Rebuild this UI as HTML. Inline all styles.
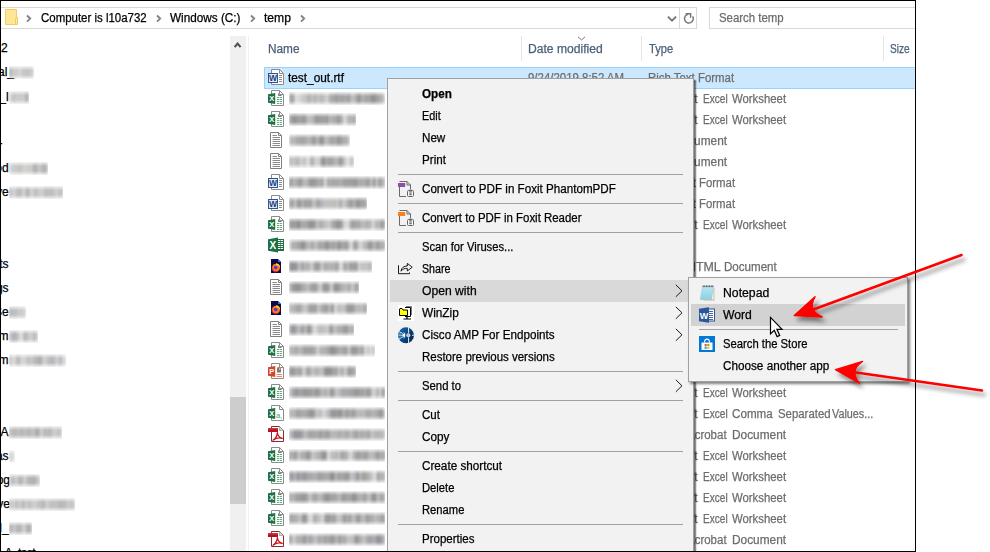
<!DOCTYPE html>
<html><head><meta charset="utf-8"><title>Open with</title>
<style>
html,body{margin:0;padding:0;background:#fff}
body{width:990px;height:552px;position:relative;overflow:hidden;font-family:'Liberation Sans',sans-serif;font-size:12px;color:#000}
#win{position:absolute;left:0;top:0;width:916px;height:552px;overflow:hidden;background:#fff}
#frame{position:absolute;left:0;top:0;width:916px;height:552px;box-sizing:border-box;border:1px solid #000;z-index:50;pointer-events:none}
.t{position:absolute;white-space:pre;line-height:22px;height:22px;font-size:12px;transform-origin:0 50%;-webkit-text-stroke:.25px}
.ic{position:absolute;overflow:visible}
.bl{position:absolute;filter:blur(1.7px);-webkit-mask-image:linear-gradient(180deg,rgba(0,0,0,.35),#000 35%,#000 65%,rgba(0,0,0,.35));mask-image:linear-gradient(180deg,rgba(0,0,0,.35),#000 35%,#000 65%,rgba(0,0,0,.35))}
.lb{background-color:#fff}
.ln{position:absolute;background:#d9d9d9}
#menu{position:absolute;left:387px;top:78px;width:307px;height:480px;box-sizing:border-box;background:#f2f2f2;border:1px solid #a0a0a0;box-shadow:2px 2px 1.2px rgba(0,0,0,.55)}
#sub{position:absolute;left:688px;top:277px;width:220px;height:105px;box-sizing:border-box;background:#f2f2f2;border:1px solid #a0a0a0;box-shadow:2px 2px 2.5px rgba(0,0,0,.5)}
.sep{position:absolute;height:1px;background:#a0a0a0}
.hl{position:absolute;background:#d9d9d9}
.chev{position:absolute}
</style></head><body>
<div id="win">
<!-- address bar -->
<div style="position:absolute;left:-2px;top:7px;width:699px;height:22px;box-sizing:border-box;border:1px solid #d9d9d9"></div>
<div class="ln" style="left:679px;top:8px;width:1px;height:20px"></div>
<div style="position:absolute;left:709px;top:7px;width:220px;height:22px;box-sizing:border-box;border:1px solid #d9d9d9"></div>
<svg class="ic" style="left:5px;top:9px" width="14" height="17" viewBox="0 0 14 17"><path d="M.5 .5H11.5V8.5H12.5V15.5H.5Z" fill="#ffe596" stroke="#f2cd5e"/><path d="M10.5 15V9.5Q10.5 8.5 11.5 8.5H12.5" fill="none" stroke="#f2cd5e"/></svg>
<svg class="chev" style="left:26px;top:14px" width="6" height="9" viewBox="0 0 6 9"><path d="M1 1.5L4.2 4.6L1 7.7" fill="none" stroke="#808080" stroke-width="1.8"/></svg>
<svg class="chev" style="left:156px;top:14px" width="6" height="9" viewBox="0 0 6 9"><path d="M1 1.5L4.2 4.6L1 7.7" fill="none" stroke="#808080" stroke-width="1.8"/></svg>
<svg class="chev" style="left:250px;top:14px" width="6" height="9" viewBox="0 0 6 9"><path d="M1 1.5L4.2 4.6L1 7.7" fill="none" stroke="#808080" stroke-width="1.8"/></svg>
<svg class="chev" style="left:300px;top:14px" width="6" height="9" viewBox="0 0 6 9"><path d="M1 1.5L4.2 4.6L1 7.7" fill="none" stroke="#808080" stroke-width="1.8"/></svg>
<svg class="chev" style="left:667px;top:14px" width="10" height="9" viewBox="0 0 10 9"><path d="M.9 2.6L5 6.7L9.1 2.6" fill="none" stroke="#777" stroke-width="1.9"/></svg>
<svg class="chev" style="left:682px;top:11px" width="13" height="14" viewBox="0 0 13 14"><path d="M10.7 5.4A4.4 4.4 0 1 1 6.1 3.27" fill="none" stroke="#777" stroke-width="1.5"/><path d="M3.6 2.7H8.6V6.8" fill="none" stroke="#777" stroke-width="1.5"/></svg>
<!-- left pane scrollbar -->
<div style="position:absolute;left:230px;top:36px;width:16px;height:520px;background:#f0f0f0"></div>
<div style="position:absolute;left:230px;top:397px;width:16px;height:107px;background:#cdcdcd"></div>
<svg class="chev" style="left:233px;top:41px" width="10" height="8" viewBox="0 0 10 8"><path d="M1.6 6.2L4.6 2.6L7.6 6.2" fill="none" stroke="#505050" stroke-width="2.1"/></svg>
<div class="ln" style="left:248px;top:36px;width:1px;height:520px;background:#f0f0f0"></div>
<div class="t lt" style="right:908.4px;top:37px">42</div>
<div class="t lt" style="right:902.0px;top:61px">al_</div>
<div class="bl lb" style="left:9px;top:65.5px;width:25px;height:13px;background:linear-gradient(90deg,rgb(175,175,177) 0px,rgb(175,175,177) 3px,rgb(208,208,208) 3px,rgb(208,208,208) 6px,rgb(197,197,194) 6px,rgb(197,197,194) 9px,rgb(223,223,223) 9px,rgb(223,223,223) 11px,rgb(204,204,205) 11px,rgb(204,204,205) 14px,rgb(197,197,202) 14px,rgb(197,197,202) 18px,rgb(197,197,200) 18px,rgb(197,197,200) 22px,rgb(208,208,210) 22px,rgb(208,208,210) 25px)"></div>
<div class="t lt" style="right:907.4px;top:86px">_l</div>
<div class="bl lb" style="left:9px;top:90.5px;width:20px;height:13px;background:linear-gradient(90deg,rgb(213,213,211) 0px,rgb(213,213,211) 3px,rgb(196,196,198) 3px,rgb(196,196,198) 7px,rgb(205,205,211) 7px,rgb(205,205,211) 11px,rgb(196,196,200) 11px,rgb(196,196,200) 13px,rgb(209,209,215) 13px,rgb(209,209,215) 16px,rgb(175,175,174) 16px,rgb(175,175,174) 19px,rgb(174,174,175) 19px,rgb(174,174,175) 20px)"></div>
<div class="t lt" style="right:913.4px;top:132px">-</div>
<div class="t lt" style="right:907.4px;top:157px">od</div>
<div class="bl lb" style="left:9px;top:161.5px;width:39px;height:13px;background:linear-gradient(90deg,rgb(211,211,212) 0px,rgb(211,211,212) 4px,rgb(202,202,205) 4px,rgb(202,202,205) 7px,rgb(202,202,202) 7px,rgb(202,202,202) 9px,rgb(196,196,195) 9px,rgb(196,196,195) 13px,rgb(208,208,206) 13px,rgb(208,208,206) 15px,rgb(210,210,207) 15px,rgb(210,210,207) 18px,rgb(205,205,205) 18px,rgb(205,205,205) 21px,rgb(205,205,202) 21px,rgb(205,205,202) 24px,rgb(176,176,182) 24px,rgb(176,176,182) 27px,rgb(182,182,181) 27px,rgb(182,182,181) 29px,rgb(206,206,207) 29px,rgb(206,206,207) 32px,rgb(179,179,185) 32px,rgb(179,179,185) 36px,rgb(177,177,176) 36px,rgb(177,177,176) 38px,rgb(202,202,200) 38px,rgb(202,202,200) 39px)"></div>
<div class="t lt" style="right:907.4px;top:181px">ve</div>
<div class="bl lb" style="left:9px;top:185.5px;width:54px;height:13px;background:linear-gradient(90deg,rgb(180,180,185) 0px,rgb(180,180,185) 2px,rgb(209,209,212) 2px,rgb(209,209,212) 5px,rgb(213,213,219) 5px,rgb(213,213,219) 7px,rgb(185,185,187) 7px,rgb(185,185,187) 10px,rgb(187,187,185) 10px,rgb(187,187,185) 13px,rgb(211,211,211) 13px,rgb(211,211,211) 17px,rgb(171,171,168) 17px,rgb(171,171,168) 20px,rgb(207,207,204) 20px,rgb(207,207,204) 22px,rgb(212,212,212) 22px,rgb(212,212,212) 25px,rgb(180,180,186) 25px,rgb(180,180,186) 27px,rgb(199,199,200) 27px,rgb(199,199,200) 29px,rgb(201,201,199) 29px,rgb(201,201,199) 32px,rgb(213,213,219) 32px,rgb(213,213,219) 34px,rgb(195,195,199) 34px,rgb(195,195,199) 36px,rgb(185,185,183) 36px,rgb(185,185,183) 38px,rgb(194,194,193) 38px,rgb(194,194,193) 40px,rgb(188,188,191) 40px,rgb(188,188,191) 42px,rgb(191,191,196) 42px,rgb(191,191,196) 46px,rgb(211,211,209) 46px,rgb(211,211,209) 49px,rgb(192,192,197) 49px,rgb(192,192,197) 51px,rgb(199,199,200) 51px,rgb(199,199,200) 53px,rgb(172,172,173) 53px,rgb(172,172,173) 54px)"></div>
<div class="t lt" style="right:907.4px;top:253px">ts</div>
<div class="t lt" style="right:907.4px;top:277px">gs</div>
<div class="t lt" style="right:907.4px;top:301px">Se</div>
<div class="bl lb" style="left:9px;top:305.5px;width:17px;height:13px;background:linear-gradient(90deg,rgb(179,179,179) 0px,rgb(179,179,179) 2px,rgb(187,187,192) 2px,rgb(187,187,192) 4px,rgb(199,199,199) 4px,rgb(199,199,199) 6px,rgb(183,183,186) 6px,rgb(183,183,186) 8px,rgb(207,207,207) 8px,rgb(207,207,207) 11px,rgb(202,202,202) 11px,rgb(202,202,202) 14px,rgb(213,213,212) 14px,rgb(213,213,212) 16px,rgb(198,198,204) 16px,rgb(198,198,204) 17px)"></div>
<div class="t lt" style="right:907.4px;top:325px">m</div>
<div class="bl lb" style="left:9px;top:329.5px;width:29px;height:13px;background:linear-gradient(90deg,rgb(195,195,201) 0px,rgb(195,195,201) 3px,rgb(177,177,182) 3px,rgb(177,177,182) 7px,rgb(187,187,190) 7px,rgb(187,187,190) 9px,rgb(206,206,205) 9px,rgb(206,206,205) 11px,rgb(227,227,227) 11px,rgb(227,227,227) 14px,rgb(184,184,186) 14px,rgb(184,184,186) 16px,rgb(176,176,174) 16px,rgb(176,176,174) 18px,rgb(202,202,203) 18px,rgb(202,202,203) 22px,rgb(214,214,214) 22px,rgb(214,214,214) 24px,rgb(178,178,181) 24px,rgb(178,178,181) 26px,rgb(199,199,198) 26px,rgb(199,199,198) 29px)"></div>
<div class="t lt" style="right:907.4px;top:349px">m</div>
<div class="bl lb" style="left:9px;top:353.5px;width:57px;height:13px;background:linear-gradient(90deg,rgb(193,193,195) 0px,rgb(193,193,195) 3px,rgb(227,227,227) 3px,rgb(227,227,227) 6px,rgb(195,195,197) 6px,rgb(195,195,197) 9px,rgb(177,177,178) 9px,rgb(177,177,178) 11px,rgb(215,215,212) 11px,rgb(215,215,212) 15px,rgb(210,210,210) 15px,rgb(210,210,210) 18px,rgb(189,189,188) 18px,rgb(189,189,188) 21px,rgb(205,205,206) 21px,rgb(205,205,206) 24px,rgb(184,184,190) 24px,rgb(184,184,190) 26px,rgb(186,186,189) 26px,rgb(186,186,189) 29px,rgb(170,170,168) 29px,rgb(170,170,168) 33px,rgb(207,207,213) 33px,rgb(207,207,213) 36px,rgb(213,213,211) 36px,rgb(213,213,211) 38px,rgb(183,183,185) 38px,rgb(183,183,185) 40px,rgb(195,195,201) 40px,rgb(195,195,201) 42px,rgb(175,175,177) 42px,rgb(175,175,177) 44px,rgb(191,191,196) 44px,rgb(191,191,196) 47px,rgb(213,213,213) 47px,rgb(213,213,213) 50px,rgb(178,178,182) 50px,rgb(178,178,182) 53px,rgb(227,227,227) 53px,rgb(227,227,227) 55px,rgb(204,204,203) 55px,rgb(204,204,203) 57px)"></div>
<div class="t lt" style="right:907.4px;top:421px">A</div>
<div class="bl lb" style="left:9px;top:425.5px;width:53px;height:13px;background:linear-gradient(90deg,rgb(185,185,182) 0px,rgb(185,185,182) 2px,rgb(196,196,194) 2px,rgb(196,196,194) 4px,rgb(178,178,177) 4px,rgb(178,178,177) 6px,rgb(185,185,185) 6px,rgb(185,185,185) 9px,rgb(198,198,197) 9px,rgb(198,198,197) 11px,rgb(178,178,177) 11px,rgb(178,178,177) 14px,rgb(191,191,189) 14px,rgb(191,191,189) 18px,rgb(180,180,179) 18px,rgb(180,180,179) 22px,rgb(195,195,195) 22px,rgb(195,195,195) 26px,rgb(170,170,172) 26px,rgb(170,170,172) 28px,rgb(173,173,174) 28px,rgb(173,173,174) 31px,rgb(214,214,215) 31px,rgb(214,214,215) 34px,rgb(180,180,182) 34px,rgb(180,180,182) 37px,rgb(193,193,194) 37px,rgb(193,193,194) 40px,rgb(172,172,169) 40px,rgb(172,172,169) 42px,rgb(201,201,199) 42px,rgb(201,201,199) 45px,rgb(206,206,207) 45px,rgb(206,206,207) 48px,rgb(197,197,201) 48px,rgb(197,197,201) 50px,rgb(190,190,187) 50px,rgb(190,190,187) 52px,rgb(211,211,212) 52px,rgb(211,211,212) 53px)"></div>
<div class="t lt" style="right:907.4px;top:445px">as</div>
<div class="bl lb" style="left:9px;top:449.5px;width:6px;height:13px;background:linear-gradient(90deg,rgb(211,211,212) 0px,rgb(211,211,212) 4px,rgb(228,228,228) 4px,rgb(228,228,228) 6px)"></div>
<div class="t lt" style="right:906.0px;top:469px">og</div>
<div class="bl lb" style="left:9px;top:473.5px;width:31px;height:13px;background:linear-gradient(90deg,rgb(217,217,217) 0px,rgb(217,217,217) 2px,rgb(181,181,186) 2px,rgb(181,181,186) 4px,rgb(189,189,195) 4px,rgb(189,189,195) 6px,rgb(211,211,213) 6px,rgb(211,211,213) 9px,rgb(178,178,183) 9px,rgb(178,178,183) 12px,rgb(186,186,186) 12px,rgb(186,186,186) 15px,rgb(223,223,223) 15px,rgb(223,223,223) 17px,rgb(183,183,187) 17px,rgb(183,183,187) 20px,rgb(180,180,181) 20px,rgb(180,180,181) 23px,rgb(175,175,174) 23px,rgb(175,175,174) 27px,rgb(198,198,201) 27px,rgb(198,198,201) 29px,rgb(198,198,202) 29px,rgb(198,198,202) 31px)"></div>
<div class="t lt" style="right:906.0px;top:493px">ve</div>
<div class="bl lb" style="left:9px;top:497.5px;width:66px;height:13px;background:linear-gradient(90deg,rgb(193,193,190) 0px,rgb(193,193,190) 2px,rgb(202,202,205) 2px,rgb(202,202,205) 4px,rgb(212,212,209) 4px,rgb(212,212,209) 6px,rgb(191,191,189) 6px,rgb(191,191,189) 10px,rgb(210,210,210) 10px,rgb(210,210,210) 13px,rgb(170,170,174) 13px,rgb(170,170,174) 15px,rgb(206,206,206) 15px,rgb(206,206,206) 19px,rgb(190,190,195) 19px,rgb(190,190,195) 22px,rgb(204,204,203) 22px,rgb(204,204,203) 25px,rgb(209,209,207) 25px,rgb(209,209,207) 28px,rgb(191,191,197) 28px,rgb(191,191,197) 30px,rgb(196,196,198) 30px,rgb(196,196,198) 33px,rgb(178,178,179) 33px,rgb(178,178,179) 36px,rgb(210,210,207) 36px,rgb(210,210,207) 39px,rgb(198,198,196) 39px,rgb(198,198,196) 41px,rgb(193,193,198) 41px,rgb(193,193,198) 43px,rgb(193,193,198) 43px,rgb(193,193,198) 47px,rgb(195,195,196) 47px,rgb(195,195,196) 49px,rgb(182,182,187) 49px,rgb(182,182,187) 51px,rgb(186,186,184) 51px,rgb(186,186,184) 53px,rgb(186,186,190) 53px,rgb(186,186,190) 55px,rgb(184,184,189) 55px,rgb(184,184,189) 57px,rgb(202,202,208) 57px,rgb(202,202,208) 61px,rgb(196,196,194) 61px,rgb(196,196,194) 65px,rgb(202,202,207) 65px,rgb(202,202,207) 66px)"></div>
<div class="t lt" style="right:907.4px;top:517px">l_</div>
<div class="bl lb" style="left:9px;top:521.5px;width:23px;height:13px;background:linear-gradient(90deg,rgb(177,177,182) 0px,rgb(177,177,182) 4px,rgb(213,213,216) 4px,rgb(213,213,216) 6px,rgb(182,182,188) 6px,rgb(182,182,188) 10px,rgb(178,178,180) 10px,rgb(178,178,180) 13px,rgb(212,212,212) 13px,rgb(212,212,212) 17px,rgb(170,170,176) 17px,rgb(170,170,176) 19px,rgb(177,177,176) 19px,rgb(177,177,176) 21px,rgb(175,175,181) 21px,rgb(175,175,181) 23px)"></div>
<div class="t" style="left:4.5px;top:542px;letter-spacing:-.6px">A_test</div>
<!-- header -->
<div class="ln" style="left:521px;top:36px;width:1px;height:25px;background:#e5e5e5"></div>
<div class="ln" style="left:641px;top:36px;width:1px;height:25px;background:#e5e5e5"></div>
<div class="ln" style="left:883px;top:36px;width:1px;height:25px;background:#e5e5e5"></div>
<svg class="chev" style="left:577px;top:36px" width="9" height="5" viewBox="0 0 9 5"><path d="M1 .8L4.5 4L8 .8" fill="none" stroke="#777" stroke-width="1"/></svg>
<!-- selected row -->
<div style="position:absolute;left:264px;top:67px;width:660px;height:22px;box-sizing:border-box;background:#cce8ff;border:1px solid #99d1ff"></div>
<svg class="ic" style="left:268px;top:69px" width="16" height="16" viewBox="0 0 16 16"><path d="M3.5 .5H11.5L15.5 4.5V15.5H3.5Z" fill="#fff" stroke="#8c8c8c"/><path d="M11.5 .5V4.5H15.5" fill="none" stroke="#8c8c8c"/><path d="M11 6.5H14M11 8.5H14M11 10.5H14M11 12.5H14" stroke="#8c8c8c"/><rect x=".5" y="4.5" width="9" height="9" fill="#dfe8f5" stroke="#2b579a"/><text x="5" y="12.3" font-family="'Liberation Sans',sans-serif" font-size="8.5" font-weight="700" fill="#1f3f7a" text-anchor="middle">W</text></svg>
<svg class="ic" style="left:268px;top:90px" width="16" height="16" viewBox="0 0 16 16"><path d="M3.5 .5H11.5L15.5 4.5V15.5H3.5Z" fill="#fff" stroke="#8c8c8c"/><path d="M11.5 .5V4.5H15.5" fill="none" stroke="#8c8c8c"/><path d="M9 7.5H11M11.6 7.5H14M9 9.5H11M11.6 9.5H14M9 11.5H11M11.6 11.5H14M9 13.5H11M11.6 13.5H14" stroke="#5fae82"/><path d="M10.5 3.5V5.5H13.5" stroke="#555" fill="none" stroke-width=".8"/><path d="M0 4.2L7.2 3V14L0 12.8Z" fill="#1e7145"/><text x="3.7" y="11.3" font-family="'Liberation Sans',sans-serif" font-size="7.5" font-weight="700" fill="#fff" text-anchor="middle">X</text></svg>
<svg class="ic" style="left:268px;top:111px" width="16" height="16" viewBox="0 0 16 16"><path d="M3.5 .5H11.5L15.5 4.5V15.5H3.5Z" fill="#fff" stroke="#8c8c8c"/><path d="M11.5 .5V4.5H15.5" fill="none" stroke="#8c8c8c"/><path d="M9 7.5H11M11.6 7.5H14M9 9.5H11M11.6 9.5H14M9 11.5H11M11.6 11.5H14M9 13.5H11M11.6 13.5H14" stroke="#5fae82"/><path d="M10.5 3.5V5.5H13.5" stroke="#555" fill="none" stroke-width=".8"/><path d="M0 4.2L7.2 3V14L0 12.8Z" fill="#1e7145"/><text x="3.7" y="11.3" font-family="'Liberation Sans',sans-serif" font-size="7.5" font-weight="700" fill="#fff" text-anchor="middle">X</text></svg>
<svg class="ic" style="left:268px;top:132px" width="16" height="16" viewBox="0 0 16 16"><path d="M2.5 .5H10.5L13.5 3.5V15.5H2.5Z" fill="#fff" stroke="#7f7f7f"/><path d="M10.5 .5V3.5H13.5" fill="none" stroke="#7f7f7f"/><path d="M4.5 3.5H9M4.5 5.5H12M4.5 7.5H12M4.5 9.5H12M4.5 11.5H12M4.5 13.5H12" stroke="#8a8a8a"/></svg>
<svg class="ic" style="left:268px;top:153px" width="16" height="16" viewBox="0 0 16 16"><path d="M2.5 .5H10.5L13.5 3.5V15.5H2.5Z" fill="#fff" stroke="#7f7f7f"/><path d="M10.5 .5V3.5H13.5" fill="none" stroke="#7f7f7f"/><path d="M4.5 3.5H9M4.5 5.5H12M4.5 7.5H12M4.5 9.5H12M4.5 11.5H12M4.5 13.5H12" stroke="#8a8a8a"/></svg>
<svg class="ic" style="left:268px;top:174px" width="16" height="16" viewBox="0 0 16 16"><path d="M3.5 .5H11.5L15.5 4.5V15.5H3.5Z" fill="#fff" stroke="#8c8c8c"/><path d="M11.5 .5V4.5H15.5" fill="none" stroke="#8c8c8c"/><path d="M11 6.5H14M11 8.5H14M11 10.5H14M11 12.5H14" stroke="#8c8c8c"/><rect x=".5" y="4.5" width="9" height="9" fill="#dfe8f5" stroke="#2b579a"/><text x="5" y="12.3" font-family="'Liberation Sans',sans-serif" font-size="8.5" font-weight="700" fill="#1f3f7a" text-anchor="middle">W</text></svg>
<svg class="ic" style="left:268px;top:195px" width="16" height="16" viewBox="0 0 16 16"><path d="M3.5 .5H11.5L15.5 4.5V15.5H3.5Z" fill="#fff" stroke="#8c8c8c"/><path d="M11.5 .5V4.5H15.5" fill="none" stroke="#8c8c8c"/><path d="M11 6.5H14M11 8.5H14M11 10.5H14M11 12.5H14" stroke="#8c8c8c"/><rect x=".5" y="4.5" width="9" height="9" fill="#dfe8f5" stroke="#2b579a"/><text x="5" y="12.3" font-family="'Liberation Sans',sans-serif" font-size="8.5" font-weight="700" fill="#1f3f7a" text-anchor="middle">W</text></svg>
<svg class="ic" style="left:268px;top:216px" width="16" height="16" viewBox="0 0 16 16"><path d="M3.5 .5H11.5L15.5 4.5V15.5H3.5Z" fill="#fff" stroke="#8c8c8c"/><path d="M11.5 .5V4.5H15.5" fill="none" stroke="#8c8c8c"/><path d="M9 7.5H11M11.6 7.5H14M9 9.5H11M11.6 9.5H14M9 11.5H11M11.6 11.5H14M9 13.5H11M11.6 13.5H14" stroke="#5fae82"/><path d="M10.5 3.5V5.5H13.5" stroke="#555" fill="none" stroke-width=".8"/><path d="M0 4.2L7.2 3V14L0 12.8Z" fill="#1e7145"/><text x="3.7" y="11.3" font-family="'Liberation Sans',sans-serif" font-size="7.5" font-weight="700" fill="#fff" text-anchor="middle">X</text></svg>
<svg class="ic" style="left:268px;top:237px" width="16" height="16" viewBox="0 0 16 16"><rect x="9.5" y="2.5" width="6" height="11" fill="#fff" stroke="#1e7145"/><path d="M10 4.5H15M10 6.5H15M10 8.5H15M10 10.5H15M10 12.5H15" stroke="#1e7145" stroke-width="1.2"/><path d="M12.5 3V13" stroke="#1e7145" stroke-width=".6"/><path d="M0 2.2L10 .6V15.4L0 13.8Z" fill="#1e7145"/><text x="4.8" y="11.8" font-family="'Liberation Sans',sans-serif" font-size="10" font-weight="700" fill="#fff" text-anchor="middle">X</text></svg>
<svg class="ic" style="left:268px;top:258px" width="16" height="16" viewBox="0 0 16 16"><path d="M3 1H10L13 4V15H3Z" fill="#0d0b47"/><path d="M10 1L13 4H10Z" fill="#2f6bff"/><circle cx="8" cy="9.6" r="3.9" fill="#ff7a1a"/><path d="M8 5.2a4.4 4.4 0 0 1 4 5.6a3.6 3.6 0 0 0 -4 -3.6z" fill="#ffd43a"/><circle cx="7.7" cy="9.6" r="1.8" fill="#5b3fc4"/><path d="M4.2 8.6a3.9 3.9 0 0 0 3.8 4.9a3.9 3.9 0 0 0 3 -1.4a3.4 3.4 0 0 1 -6.8 -3.5z" fill="#e8235a"/></svg>
<svg class="ic" style="left:268px;top:279px" width="16" height="16" viewBox="0 0 16 16"><path d="M2.5 .5H10.5L13.5 3.5V15.5H2.5Z" fill="#fff" stroke="#7f7f7f"/><path d="M10.5 .5V3.5H13.5" fill="none" stroke="#7f7f7f"/><path d="M4.5 3.5H9M4.5 5.5H12M4.5 7.5H12M4.5 9.5H12M4.5 11.5H12M4.5 13.5H12" stroke="#8a8a8a"/></svg>
<svg class="ic" style="left:268px;top:300px" width="16" height="16" viewBox="0 0 16 16"><path d="M3 1H10L13 4V15H3Z" fill="#0d0b47"/><path d="M10 1L13 4H10Z" fill="#2f6bff"/><circle cx="8" cy="9.6" r="3.9" fill="#ff7a1a"/><path d="M8 5.2a4.4 4.4 0 0 1 4 5.6a3.6 3.6 0 0 0 -4 -3.6z" fill="#ffd43a"/><circle cx="7.7" cy="9.6" r="1.8" fill="#5b3fc4"/><path d="M4.2 8.6a3.9 3.9 0 0 0 3.8 4.9a3.9 3.9 0 0 0 3 -1.4a3.4 3.4 0 0 1 -6.8 -3.5z" fill="#e8235a"/></svg>
<svg class="ic" style="left:268px;top:321px" width="16" height="16" viewBox="0 0 16 16"><path d="M2.5 .5H10.5L13.5 3.5V15.5H2.5Z" fill="#fff" stroke="#7f7f7f"/><path d="M10.5 .5V3.5H13.5" fill="none" stroke="#7f7f7f"/><path d="M4.5 3.5H9M4.5 5.5H12M4.5 7.5H12M4.5 9.5H12M4.5 11.5H12M4.5 13.5H12" stroke="#8a8a8a"/></svg>
<svg class="ic" style="left:268px;top:342px" width="16" height="16" viewBox="0 0 16 16"><path d="M3.5 .5H11.5L15.5 4.5V15.5H3.5Z" fill="#fff" stroke="#8c8c8c"/><path d="M11.5 .5V4.5H15.5" fill="none" stroke="#8c8c8c"/><path d="M9 7.5H11M11.6 7.5H14M9 9.5H11M11.6 9.5H14M9 11.5H11M11.6 11.5H14M9 13.5H11M11.6 13.5H14" stroke="#5fae82"/><path d="M10.5 3.5V5.5H13.5" stroke="#555" fill="none" stroke-width=".8"/><path d="M0 4.2L7.2 3V14L0 12.8Z" fill="#1e7145"/><text x="3.7" y="11.3" font-family="'Liberation Sans',sans-serif" font-size="7.5" font-weight="700" fill="#fff" text-anchor="middle">X</text></svg>
<svg class="ic" style="left:268px;top:363px" width="16" height="16" viewBox="0 0 16 16"><path d="M3.5 .5H11.5L15.5 4.5V15.5H3.5Z" fill="#fff" stroke="#8c8c8c"/><path d="M11.5 .5V4.5H15.5" fill="none" stroke="#8c8c8c"/><path d="M9 4.5H11.5V7H13V9.5H9Z" fill="#7a7a7a"/><path d="M10 4.5H12.5V7" stroke="#e8753c" fill="none"/><path d="M8.5 11.5H14M8.5 13.5H14" stroke="#ee8a5e"/><path d="M0 4.2L7.2 3V14L0 12.8Z" fill="#d24726"/><text x="3.8" y="11.3" font-family="'Liberation Sans',sans-serif" font-size="7.5" font-weight="700" fill="#fff" text-anchor="middle">P</text></svg>
<svg class="ic" style="left:268px;top:384px" width="16" height="16" viewBox="0 0 16 16"><path d="M3.5 .5H11.5L15.5 4.5V15.5H3.5Z" fill="#fff" stroke="#8c8c8c"/><path d="M11.5 .5V4.5H15.5" fill="none" stroke="#8c8c8c"/><path d="M9 7.5H11M11.6 7.5H14M9 9.5H11M11.6 9.5H14M9 11.5H11M11.6 11.5H14M9 13.5H11M11.6 13.5H14" stroke="#5fae82"/><path d="M10.5 3.5V5.5H13.5" stroke="#555" fill="none" stroke-width=".8"/><path d="M0 4.2L7.2 3V14L0 12.8Z" fill="#1e7145"/><text x="3.7" y="11.3" font-family="'Liberation Sans',sans-serif" font-size="7.5" font-weight="700" fill="#fff" text-anchor="middle">X</text></svg>
<svg class="ic" style="left:268px;top:405px" width="16" height="16" viewBox="0 0 16 16"><path d="M3.5 .5H11.5L15.5 4.5V15.5H3.5Z" fill="#fff" stroke="#8c8c8c"/><path d="M11.5 .5V4.5H15.5" fill="none" stroke="#8c8c8c"/><path d="M0 4.2L7.2 3V14L0 12.8Z" fill="#1e7145"/><text x="3.7" y="11.3" font-family="'Liberation Sans',sans-serif" font-size="7.5" font-weight="700" fill="#fff" text-anchor="middle">X</text><text x="11.2" y="12.8" font-family="'Liberation Sans',sans-serif" font-size="7.5" font-weight="400" fill="#3f9a68" text-anchor="middle">a,</text></svg>
<svg class="ic" style="left:268px;top:426px" width="16" height="16" viewBox="0 0 16 16"><path d="M3.5 .5H11.5L15.5 4.5V15.5H3.5Z" fill="#fff" stroke="#8e2a35"/><path d="M11.5 .5V4.5H15.5Z" fill="#d9d9d9" stroke="#8a8a8a" stroke-width=".6"/><rect x="0" y="2.2" width="10" height="3.8" fill="#b5121f"/><rect x="0" y="2.2" width="10" height="1.3" fill="#d4323e"/><path d="M5 14.2C7.5 12.5 9.2 9.5 9.4 6.6C9.5 8.8 11.5 11.6 14.3 12.4C11.5 11.4 7.8 12.2 5 14.2Z" fill="none" stroke="#c4161c" stroke-width="1.3" stroke-linejoin="round"/></svg>
<svg class="ic" style="left:268px;top:447px" width="16" height="16" viewBox="0 0 16 16"><path d="M3.5 .5H11.5L15.5 4.5V15.5H3.5Z" fill="#fff" stroke="#8c8c8c"/><path d="M11.5 .5V4.5H15.5" fill="none" stroke="#8c8c8c"/><path d="M9 7.5H11M11.6 7.5H14M9 9.5H11M11.6 9.5H14M9 11.5H11M11.6 11.5H14M9 13.5H11M11.6 13.5H14" stroke="#5fae82"/><path d="M10.5 3.5V5.5H13.5" stroke="#555" fill="none" stroke-width=".8"/><path d="M0 4.2L7.2 3V14L0 12.8Z" fill="#1e7145"/><text x="3.7" y="11.3" font-family="'Liberation Sans',sans-serif" font-size="7.5" font-weight="700" fill="#fff" text-anchor="middle">X</text></svg>
<svg class="ic" style="left:268px;top:468px" width="16" height="16" viewBox="0 0 16 16"><path d="M3.5 .5H11.5L15.5 4.5V15.5H3.5Z" fill="#fff" stroke="#8c8c8c"/><path d="M11.5 .5V4.5H15.5" fill="none" stroke="#8c8c8c"/><path d="M9 7.5H11M11.6 7.5H14M9 9.5H11M11.6 9.5H14M9 11.5H11M11.6 11.5H14M9 13.5H11M11.6 13.5H14" stroke="#5fae82"/><path d="M10.5 3.5V5.5H13.5" stroke="#555" fill="none" stroke-width=".8"/><path d="M0 4.2L7.2 3V14L0 12.8Z" fill="#1e7145"/><text x="3.7" y="11.3" font-family="'Liberation Sans',sans-serif" font-size="7.5" font-weight="700" fill="#fff" text-anchor="middle">X</text></svg>
<svg class="ic" style="left:268px;top:489px" width="16" height="16" viewBox="0 0 16 16"><path d="M3.5 .5H11.5L15.5 4.5V15.5H3.5Z" fill="#fff" stroke="#8c8c8c"/><path d="M11.5 .5V4.5H15.5" fill="none" stroke="#8c8c8c"/><path d="M9 7.5H11M11.6 7.5H14M9 9.5H11M11.6 9.5H14M9 11.5H11M11.6 11.5H14M9 13.5H11M11.6 13.5H14" stroke="#5fae82"/><path d="M10.5 3.5V5.5H13.5" stroke="#555" fill="none" stroke-width=".8"/><path d="M0 4.2L7.2 3V14L0 12.8Z" fill="#1e7145"/><text x="3.7" y="11.3" font-family="'Liberation Sans',sans-serif" font-size="7.5" font-weight="700" fill="#fff" text-anchor="middle">X</text></svg>
<svg class="ic" style="left:268px;top:510px" width="16" height="16" viewBox="0 0 16 16"><path d="M3.5 .5H11.5L15.5 4.5V15.5H3.5Z" fill="#fff" stroke="#8c8c8c"/><path d="M11.5 .5V4.5H15.5" fill="none" stroke="#8c8c8c"/><path d="M9 7.5H11M11.6 7.5H14M9 9.5H11M11.6 9.5H14M9 11.5H11M11.6 11.5H14M9 13.5H11M11.6 13.5H14" stroke="#5fae82"/><path d="M10.5 3.5V5.5H13.5" stroke="#555" fill="none" stroke-width=".8"/><path d="M0 4.2L7.2 3V14L0 12.8Z" fill="#1e7145"/><text x="3.7" y="11.3" font-family="'Liberation Sans',sans-serif" font-size="7.5" font-weight="700" fill="#fff" text-anchor="middle">X</text></svg>
<svg class="ic" style="left:268px;top:531px" width="16" height="16" viewBox="0 0 16 16"><path d="M3.5 .5H11.5L15.5 4.5V15.5H3.5Z" fill="#fff" stroke="#8e2a35"/><path d="M11.5 .5V4.5H15.5Z" fill="#d9d9d9" stroke="#8a8a8a" stroke-width=".6"/><rect x="0" y="2.2" width="10" height="3.8" fill="#b5121f"/><rect x="0" y="2.2" width="10" height="1.3" fill="#d4323e"/><path d="M5 14.2C7.5 12.5 9.2 9.5 9.4 6.6C9.5 8.8 11.5 11.6 14.3 12.4C11.5 11.4 7.8 12.2 5 14.2Z" fill="none" stroke="#c4161c" stroke-width="1.3" stroke-linejoin="round"/></svg>
<div class="bl" style="left:289px;top:91.5px;width:96px;height:13px;background:linear-gradient(90deg,rgb(167,167,164) 0px,rgb(167,167,164) 3px,rgb(148,148,150) 3px,rgb(148,148,150) 5px,rgb(221,221,221) 5px,rgb(221,221,221) 9px,rgb(218,218,218) 9px,rgb(218,218,218) 11px,rgb(207,207,207) 11px,rgb(207,207,207) 14px,rgb(194,194,200) 14px,rgb(194,194,200) 18px,rgb(182,182,188) 18px,rgb(182,182,188) 20px,rgb(167,167,164) 20px,rgb(167,167,164) 22px,rgb(209,209,209) 22px,rgb(209,209,209) 24px,rgb(176,176,174) 24px,rgb(176,176,174) 27px,rgb(194,194,193) 27px,rgb(194,194,193) 31px,rgb(182,182,182) 31px,rgb(182,182,182) 33px,rgb(187,187,185) 33px,rgb(187,187,185) 36px,rgb(211,211,211) 36px,rgb(211,211,211) 40px,rgb(169,169,171) 40px,rgb(169,169,171) 43px,rgb(171,171,173) 43px,rgb(171,171,173) 46px,rgb(153,153,153) 46px,rgb(153,153,153) 49px,rgb(175,175,179) 49px,rgb(175,175,179) 51px,rgb(160,160,166) 51px,rgb(160,160,166) 54px,rgb(168,168,167) 54px,rgb(168,168,167) 56px,rgb(173,173,176) 56px,rgb(173,173,176) 59px,rgb(146,146,151) 59px,rgb(146,146,151) 61px,rgb(194,194,196) 61px,rgb(194,194,196) 65px,rgb(180,180,184) 65px,rgb(180,180,184) 68px,rgb(146,146,144) 68px,rgb(146,146,144) 72px,rgb(184,184,182) 72px,rgb(184,184,182) 75px,rgb(161,161,167) 75px,rgb(161,161,167) 77px,rgb(166,166,168) 77px,rgb(166,166,168) 80px,rgb(164,164,163) 80px,rgb(164,164,163) 82px,rgb(145,145,145) 82px,rgb(145,145,145) 86px,rgb(157,157,160) 86px,rgb(157,157,160) 89px,rgb(173,173,171) 89px,rgb(173,173,171) 92px,rgb(177,177,178) 92px,rgb(177,177,178) 94px,rgb(197,197,202) 94px,rgb(197,197,202) 96px)"></div>
<div class="bl" style="left:289px;top:112.5px;width:67px;height:13px;background:linear-gradient(90deg,rgb(164,164,167) 0px,rgb(164,164,167) 3px,rgb(153,153,152) 3px,rgb(153,153,152) 5px,rgb(142,142,146) 5px,rgb(142,142,146) 7px,rgb(160,160,157) 7px,rgb(160,160,157) 11px,rgb(165,165,171) 11px,rgb(165,165,171) 13px,rgb(150,150,155) 13px,rgb(150,150,155) 17px,rgb(189,189,186) 17px,rgb(189,189,186) 21px,rgb(191,191,196) 21px,rgb(191,191,196) 24px,rgb(167,167,165) 24px,rgb(167,167,165) 27px,rgb(145,145,145) 27px,rgb(145,145,145) 30px,rgb(170,170,169) 30px,rgb(170,170,169) 32px,rgb(145,145,143) 32px,rgb(145,145,143) 34px,rgb(176,176,174) 34px,rgb(176,176,174) 36px,rgb(146,146,146) 36px,rgb(146,146,146) 39px,rgb(182,182,183) 39px,rgb(182,182,183) 43px,rgb(172,172,170) 43px,rgb(172,172,170) 46px,rgb(171,171,175) 46px,rgb(171,171,175) 48px,rgb(151,151,149) 48px,rgb(151,151,149) 51px,rgb(172,172,171) 51px,rgb(172,172,171) 54px,rgb(221,221,221) 54px,rgb(221,221,221) 58px,rgb(176,176,173) 58px,rgb(176,176,173) 61px,rgb(183,183,181) 61px,rgb(183,183,181) 65px,rgb(152,152,154) 65px,rgb(152,152,154) 67px)"></div>
<div class="bl" style="left:289px;top:133.5px;width:61px;height:13px;background:linear-gradient(90deg,rgb(191,191,196) 0px,rgb(191,191,196) 2px,rgb(181,181,181) 2px,rgb(181,181,181) 5px,rgb(189,189,189) 5px,rgb(189,189,189) 7px,rgb(164,164,161) 7px,rgb(164,164,161) 9px,rgb(172,172,173) 9px,rgb(172,172,173) 11px,rgb(164,164,168) 11px,rgb(164,164,168) 13px,rgb(165,165,163) 13px,rgb(165,165,163) 16px,rgb(172,172,172) 16px,rgb(172,172,172) 18px,rgb(181,181,187) 18px,rgb(181,181,187) 21px,rgb(183,183,185) 21px,rgb(183,183,185) 23px,rgb(149,149,152) 23px,rgb(149,149,152) 25px,rgb(153,153,156) 25px,rgb(153,153,156) 27px,rgb(188,188,191) 27px,rgb(188,188,191) 30px,rgb(147,147,146) 30px,rgb(147,147,146) 33px,rgb(143,143,142) 33px,rgb(143,143,142) 35px,rgb(193,193,192) 35px,rgb(193,193,192) 39px,rgb(172,172,174) 39px,rgb(172,172,174) 43px,rgb(150,150,147) 43px,rgb(150,150,147) 45px,rgb(188,188,186) 45px,rgb(188,188,186) 47px,rgb(150,150,153) 47px,rgb(150,150,153) 51px,rgb(155,155,152) 51px,rgb(155,155,152) 53px,rgb(174,174,174) 53px,rgb(174,174,174) 56px,rgb(176,176,179) 56px,rgb(176,176,179) 60px,rgb(228,228,228) 60px,rgb(228,228,228) 61px)"></div>
<div class="bl" style="left:289px;top:154.5px;width:65px;height:13px;background:linear-gradient(90deg,rgb(184,184,190) 0px,rgb(184,184,190) 3px,rgb(198,198,203) 3px,rgb(198,198,203) 7px,rgb(175,175,180) 7px,rgb(175,175,180) 9px,rgb(191,191,190) 9px,rgb(191,191,190) 11px,rgb(209,209,209) 11px,rgb(209,209,209) 15px,rgb(181,181,179) 15px,rgb(181,181,179) 17px,rgb(226,226,226) 17px,rgb(226,226,226) 21px,rgb(172,172,170) 21px,rgb(172,172,170) 25px,rgb(211,211,211) 25px,rgb(211,211,211) 29px,rgb(208,208,208) 29px,rgb(208,208,208) 32px,rgb(143,143,141) 32px,rgb(143,143,141) 36px,rgb(174,174,180) 36px,rgb(174,174,180) 39px,rgb(159,159,163) 39px,rgb(159,159,163) 43px,rgb(172,172,177) 43px,rgb(172,172,177) 47px,rgb(198,198,199) 47px,rgb(198,198,199) 49px,rgb(154,154,158) 49px,rgb(154,154,158) 53px,rgb(167,167,171) 53px,rgb(167,167,171) 55px,rgb(212,212,212) 55px,rgb(212,212,212) 58px,rgb(226,226,226) 58px,rgb(226,226,226) 61px,rgb(191,191,190) 61px,rgb(191,191,190) 64px,rgb(198,198,197) 64px,rgb(198,198,197) 65px)"></div>
<div class="bl" style="left:289px;top:175.5px;width:96px;height:13px;background:linear-gradient(90deg,rgb(148,148,151) 0px,rgb(148,148,151) 3px,rgb(184,184,184) 3px,rgb(184,184,184) 6px,rgb(174,174,177) 6px,rgb(174,174,177) 8px,rgb(164,164,166) 8px,rgb(164,164,166) 11px,rgb(143,143,145) 11px,rgb(143,143,145) 13px,rgb(187,187,184) 13px,rgb(187,187,184) 17px,rgb(181,181,182) 17px,rgb(181,181,182) 20px,rgb(149,149,149) 20px,rgb(149,149,149) 24px,rgb(159,159,156) 24px,rgb(159,159,156) 26px,rgb(150,150,153) 26px,rgb(150,150,153) 28px,rgb(176,176,181) 28px,rgb(176,176,181) 31px,rgb(162,162,160) 31px,rgb(162,162,160) 35px,rgb(227,227,227) 35px,rgb(227,227,227) 38px,rgb(146,146,147) 38px,rgb(146,146,147) 40px,rgb(193,193,194) 40px,rgb(193,193,194) 42px,rgb(156,156,154) 42px,rgb(156,156,154) 44px,rgb(171,171,168) 44px,rgb(171,171,168) 47px,rgb(168,168,169) 47px,rgb(168,168,169) 50px,rgb(175,175,175) 50px,rgb(175,175,175) 54px,rgb(158,158,155) 54px,rgb(158,158,155) 56px,rgb(161,161,162) 56px,rgb(161,161,162) 58px,rgb(160,160,164) 58px,rgb(160,160,164) 62px,rgb(159,159,161) 62px,rgb(159,159,161) 66px,rgb(144,144,141) 66px,rgb(144,144,141) 68px,rgb(177,177,177) 68px,rgb(177,177,177) 70px,rgb(170,170,168) 70px,rgb(170,170,168) 74px,rgb(176,176,179) 74px,rgb(176,176,179) 77px,rgb(155,155,155) 77px,rgb(155,155,155) 81px,rgb(198,198,197) 81px,rgb(198,198,197) 84px,rgb(145,145,144) 84px,rgb(145,145,144) 87px,rgb(228,228,228) 87px,rgb(228,228,228) 89px,rgb(145,145,143) 89px,rgb(145,145,143) 92px,rgb(184,184,185) 92px,rgb(184,184,185) 95px,rgb(160,160,157) 95px,rgb(160,160,157) 96px)"></div>
<div class="bl" style="left:289px;top:196.5px;width:78px;height:13px;background:linear-gradient(90deg,rgb(159,159,163) 0px,rgb(159,159,163) 3px,rgb(163,163,168) 3px,rgb(163,163,168) 5px,rgb(198,198,199) 5px,rgb(198,198,199) 8px,rgb(142,142,144) 8px,rgb(142,142,144) 10px,rgb(159,159,164) 10px,rgb(159,159,164) 13px,rgb(191,191,188) 13px,rgb(191,191,188) 15px,rgb(147,147,146) 15px,rgb(147,147,146) 17px,rgb(167,167,164) 17px,rgb(167,167,164) 20px,rgb(156,156,154) 20px,rgb(156,156,154) 23px,rgb(196,196,195) 23px,rgb(196,196,195) 27px,rgb(162,162,166) 27px,rgb(162,162,166) 31px,rgb(181,181,180) 31px,rgb(181,181,180) 33px,rgb(187,187,192) 33px,rgb(187,187,192) 35px,rgb(193,193,198) 35px,rgb(193,193,198) 38px,rgb(190,190,195) 38px,rgb(190,190,195) 40px,rgb(193,193,190) 40px,rgb(193,193,190) 44px,rgb(187,187,187) 44px,rgb(187,187,187) 48px,rgb(209,209,209) 48px,rgb(209,209,209) 50px,rgb(166,166,170) 50px,rgb(166,166,170) 53px,rgb(205,205,205) 53px,rgb(205,205,205) 57px,rgb(173,173,174) 57px,rgb(173,173,174) 61px,rgb(146,146,151) 61px,rgb(146,146,151) 63px,rgb(175,175,173) 63px,rgb(175,175,173) 67px,rgb(146,146,147) 67px,rgb(146,146,147) 70px,rgb(155,155,155) 70px,rgb(155,155,155) 72px,rgb(166,166,164) 72px,rgb(166,166,164) 75px,rgb(160,160,157) 75px,rgb(160,160,157) 78px)"></div>
<div class="bl" style="left:289px;top:217.5px;width:96px;height:13px;background:linear-gradient(90deg,rgb(154,154,152) 0px,rgb(154,154,152) 4px,rgb(158,158,159) 4px,rgb(158,158,159) 8px,rgb(142,142,146) 8px,rgb(142,142,146) 12px,rgb(185,185,183) 12px,rgb(185,185,183) 14px,rgb(160,160,165) 14px,rgb(160,160,165) 16px,rgb(171,171,169) 16px,rgb(171,171,169) 19px,rgb(147,147,151) 19px,rgb(147,147,151) 23px,rgb(146,146,151) 23px,rgb(146,146,151) 25px,rgb(166,166,166) 25px,rgb(166,166,166) 28px,rgb(207,207,207) 28px,rgb(207,207,207) 30px,rgb(158,158,160) 30px,rgb(158,158,160) 32px,rgb(182,182,187) 32px,rgb(182,182,187) 34px,rgb(187,187,189) 34px,rgb(187,187,189) 37px,rgb(198,198,202) 37px,rgb(198,198,202) 39px,rgb(205,205,205) 39px,rgb(205,205,205) 42px,rgb(167,167,168) 42px,rgb(167,167,168) 45px,rgb(166,166,168) 45px,rgb(166,166,168) 47px,rgb(142,142,144) 47px,rgb(142,142,144) 49px,rgb(149,149,149) 49px,rgb(149,149,149) 52px,rgb(160,160,161) 52px,rgb(160,160,161) 54px,rgb(217,217,217) 54px,rgb(217,217,217) 57px,rgb(218,218,218) 57px,rgb(218,218,218) 61px,rgb(159,159,157) 61px,rgb(159,159,157) 64px,rgb(160,160,159) 64px,rgb(160,160,159) 66px,rgb(169,169,174) 66px,rgb(169,169,174) 68px,rgb(165,165,168) 68px,rgb(165,165,168) 71px,rgb(182,182,185) 71px,rgb(182,182,185) 73px,rgb(188,188,186) 73px,rgb(188,188,186) 77px,rgb(168,168,172) 77px,rgb(168,168,172) 79px,rgb(183,183,184) 79px,rgb(183,183,184) 83px,rgb(222,222,222) 83px,rgb(222,222,222) 86px,rgb(168,168,170) 86px,rgb(168,168,170) 88px,rgb(189,189,190) 88px,rgb(189,189,190) 91px,rgb(161,161,165) 91px,rgb(161,161,165) 94px,rgb(149,149,148) 94px,rgb(149,149,148) 96px)"></div>
<div class="bl" style="left:289px;top:238.5px;width:96px;height:13px;background:linear-gradient(90deg,rgb(221,221,221) 0px,rgb(221,221,221) 2px,rgb(170,170,172) 2px,rgb(170,170,172) 5px,rgb(177,177,177) 5px,rgb(177,177,177) 8px,rgb(163,163,168) 8px,rgb(163,163,168) 10px,rgb(165,165,166) 10px,rgb(165,165,166) 12px,rgb(143,143,146) 12px,rgb(143,143,146) 16px,rgb(175,175,175) 16px,rgb(175,175,175) 19px,rgb(190,190,187) 19px,rgb(190,190,187) 22px,rgb(165,165,164) 22px,rgb(165,165,164) 25px,rgb(192,192,192) 25px,rgb(192,192,192) 29px,rgb(157,157,160) 29px,rgb(157,157,160) 31px,rgb(169,169,170) 31px,rgb(169,169,170) 34px,rgb(169,169,173) 34px,rgb(169,169,173) 36px,rgb(146,146,149) 36px,rgb(146,146,149) 40px,rgb(170,170,170) 40px,rgb(170,170,170) 44px,rgb(151,151,156) 44px,rgb(151,151,156) 46px,rgb(188,188,192) 46px,rgb(188,188,192) 48px,rgb(144,144,141) 48px,rgb(144,144,141) 50px,rgb(144,144,145) 50px,rgb(144,144,145) 52px,rgb(175,175,178) 52px,rgb(175,175,178) 54px,rgb(161,161,166) 54px,rgb(161,161,166) 56px,rgb(158,158,158) 56px,rgb(158,158,158) 60px,rgb(222,222,222) 60px,rgb(222,222,222) 64px,rgb(159,159,161) 64px,rgb(159,159,161) 67px,rgb(157,157,162) 67px,rgb(157,157,162) 69px,rgb(218,218,218) 69px,rgb(218,218,218) 71px,rgb(211,211,211) 71px,rgb(211,211,211) 74px,rgb(183,183,186) 74px,rgb(183,183,186) 77px,rgb(184,184,187) 77px,rgb(184,184,187) 79px,rgb(144,144,146) 79px,rgb(144,144,146) 82px,rgb(167,167,167) 82px,rgb(167,167,167) 85px,rgb(189,189,194) 85px,rgb(189,189,194) 87px,rgb(154,154,155) 87px,rgb(154,154,155) 89px,rgb(156,156,157) 89px,rgb(156,156,157) 91px,rgb(181,181,185) 91px,rgb(181,181,185) 94px,rgb(156,156,160) 94px,rgb(156,156,160) 96px)"></div>
<div class="bl" style="left:289px;top:259.5px;width:83px;height:13px;background:linear-gradient(90deg,rgb(145,145,151) 0px,rgb(145,145,151) 3px,rgb(145,145,145) 3px,rgb(145,145,145) 5px,rgb(151,151,154) 5px,rgb(151,151,154) 7px,rgb(153,153,156) 7px,rgb(153,153,156) 9px,rgb(198,198,200) 9px,rgb(198,198,200) 12px,rgb(152,152,154) 12px,rgb(152,152,154) 14px,rgb(175,175,179) 14px,rgb(175,175,179) 16px,rgb(188,188,191) 16px,rgb(188,188,191) 18px,rgb(170,170,169) 18px,rgb(170,170,169) 21px,rgb(213,213,213) 21px,rgb(213,213,213) 23px,rgb(198,198,196) 23px,rgb(198,198,196) 25px,rgb(155,155,158) 25px,rgb(155,155,158) 29px,rgb(161,161,164) 29px,rgb(161,161,164) 32px,rgb(220,220,220) 32px,rgb(220,220,220) 34px,rgb(170,170,170) 34px,rgb(170,170,170) 36px,rgb(172,172,169) 36px,rgb(172,172,169) 39px,rgb(182,182,185) 39px,rgb(182,182,185) 42px,rgb(171,171,169) 42px,rgb(171,171,169) 44px,rgb(189,189,187) 44px,rgb(189,189,187) 46px,rgb(159,159,161) 46px,rgb(159,159,161) 50px,rgb(228,228,228) 50px,rgb(228,228,228) 54px,rgb(161,161,158) 54px,rgb(161,161,158) 57px,rgb(182,182,180) 57px,rgb(182,182,180) 61px,rgb(148,148,152) 61px,rgb(148,148,152) 63px,rgb(166,166,167) 63px,rgb(166,166,167) 66px,rgb(150,150,154) 66px,rgb(150,150,154) 69px,rgb(228,228,228) 69px,rgb(228,228,228) 71px,rgb(191,191,190) 71px,rgb(191,191,190) 74px,rgb(197,197,199) 74px,rgb(197,197,199) 78px,rgb(192,192,198) 78px,rgb(192,192,198) 81px,rgb(167,167,166) 81px,rgb(167,167,166) 83px)"></div>
<div class="bl" style="left:289px;top:280.5px;width:70px;height:13px;background:linear-gradient(90deg,rgb(183,183,180) 0px,rgb(183,183,180) 2px,rgb(162,162,161) 2px,rgb(162,162,161) 5px,rgb(146,146,147) 5px,rgb(146,146,147) 8px,rgb(148,148,151) 8px,rgb(148,148,151) 12px,rgb(170,170,169) 12px,rgb(170,170,169) 15px,rgb(171,171,177) 15px,rgb(171,171,177) 17px,rgb(196,196,194) 17px,rgb(196,196,194) 19px,rgb(178,178,179) 19px,rgb(178,178,179) 22px,rgb(158,158,158) 22px,rgb(158,158,158) 25px,rgb(157,157,157) 25px,rgb(157,157,157) 28px,rgb(179,179,179) 28px,rgb(179,179,179) 30px,rgb(213,213,213) 30px,rgb(213,213,213) 33px,rgb(156,156,154) 33px,rgb(156,156,154) 35px,rgb(148,148,145) 35px,rgb(148,148,145) 38px,rgb(156,156,160) 38px,rgb(156,156,160) 41px,rgb(214,214,214) 41px,rgb(214,214,214) 44px,rgb(154,154,160) 44px,rgb(154,154,160) 46px,rgb(146,146,148) 46px,rgb(146,146,148) 50px,rgb(170,170,176) 50px,rgb(170,170,176) 54px,rgb(184,184,181) 54px,rgb(184,184,181) 57px,rgb(187,187,193) 57px,rgb(187,187,193) 59px,rgb(165,165,167) 59px,rgb(165,165,167) 62px,rgb(213,213,213) 62px,rgb(213,213,213) 64px,rgb(183,183,183) 64px,rgb(183,183,183) 66px,rgb(168,168,170) 66px,rgb(168,168,170) 68px,rgb(146,146,146) 68px,rgb(146,146,146) 70px)"></div>
<div class="bl" style="left:289px;top:301.5px;width:78px;height:13px;background:linear-gradient(90deg,rgb(177,177,181) 0px,rgb(177,177,181) 2px,rgb(192,192,195) 2px,rgb(192,192,195) 4px,rgb(176,176,174) 4px,rgb(176,176,174) 8px,rgb(159,159,162) 8px,rgb(159,159,162) 10px,rgb(168,168,165) 10px,rgb(168,168,165) 13px,rgb(198,198,200) 13px,rgb(198,198,200) 16px,rgb(197,197,199) 16px,rgb(197,197,199) 19px,rgb(167,167,167) 19px,rgb(167,167,167) 21px,rgb(152,152,155) 21px,rgb(152,152,155) 23px,rgb(167,167,173) 23px,rgb(167,167,173) 25px,rgb(152,152,151) 25px,rgb(152,152,151) 28px,rgb(209,209,209) 28px,rgb(209,209,209) 30px,rgb(181,181,183) 30px,rgb(181,181,183) 33px,rgb(164,164,165) 33px,rgb(164,164,165) 37px,rgb(146,146,144) 37px,rgb(146,146,144) 39px,rgb(193,193,193) 39px,rgb(193,193,193) 42px,rgb(144,144,148) 42px,rgb(144,144,148) 45px,rgb(225,225,225) 45px,rgb(225,225,225) 48px,rgb(187,187,193) 48px,rgb(187,187,193) 51px,rgb(196,196,196) 51px,rgb(196,196,196) 53px,rgb(196,196,196) 53px,rgb(196,196,196) 57px,rgb(155,155,152) 57px,rgb(155,155,152) 60px,rgb(152,152,155) 60px,rgb(152,152,155) 63px,rgb(157,157,157) 63px,rgb(157,157,157) 66px,rgb(195,195,192) 66px,rgb(195,195,192) 68px,rgb(180,180,184) 68px,rgb(180,180,184) 71px,rgb(191,191,192) 71px,rgb(191,191,192) 75px,rgb(157,157,160) 75px,rgb(157,157,160) 78px)"></div>
<div class="bl" style="left:289px;top:322.5px;width:65px;height:13px;background:linear-gradient(90deg,rgb(170,170,175) 0px,rgb(170,170,175) 3px,rgb(142,142,148) 3px,rgb(142,142,148) 6px,rgb(170,170,176) 6px,rgb(170,170,176) 9px,rgb(193,193,197) 9px,rgb(193,193,197) 12px,rgb(150,150,152) 12px,rgb(150,150,152) 15px,rgb(193,193,197) 15px,rgb(193,193,197) 18px,rgb(144,144,141) 18px,rgb(144,144,141) 22px,rgb(188,188,190) 22px,rgb(188,188,190) 24px,rgb(221,221,221) 24px,rgb(221,221,221) 28px,rgb(192,192,191) 28px,rgb(192,192,191) 31px,rgb(181,181,179) 31px,rgb(181,181,179) 33px,rgb(198,198,202) 33px,rgb(198,198,202) 35px,rgb(192,192,191) 35px,rgb(192,192,191) 38px,rgb(216,216,216) 38px,rgb(216,216,216) 40px,rgb(152,152,154) 40px,rgb(152,152,154) 44px,rgb(194,194,198) 44px,rgb(194,194,198) 48px,rgb(172,172,172) 48px,rgb(172,172,172) 50px,rgb(174,174,174) 50px,rgb(174,174,174) 54px,rgb(154,154,153) 54px,rgb(154,154,153) 57px,rgb(159,159,161) 57px,rgb(159,159,161) 60px,rgb(192,192,193) 60px,rgb(192,192,193) 63px,rgb(145,145,147) 63px,rgb(145,145,147) 65px)"></div>
<div class="bl" style="left:289px;top:343.5px;width:86px;height:13px;background:linear-gradient(90deg,rgb(179,179,177) 0px,rgb(179,179,177) 3px,rgb(182,182,185) 3px,rgb(182,182,185) 6px,rgb(165,165,171) 6px,rgb(165,165,171) 9px,rgb(190,190,188) 9px,rgb(190,190,188) 11px,rgb(181,181,178) 11px,rgb(181,181,178) 14px,rgb(158,158,159) 14px,rgb(158,158,159) 17px,rgb(162,162,159) 17px,rgb(162,162,159) 21px,rgb(160,160,166) 21px,rgb(160,160,166) 23px,rgb(165,165,162) 23px,rgb(165,165,162) 26px,rgb(181,181,178) 26px,rgb(181,181,178) 28px,rgb(223,223,223) 28px,rgb(223,223,223) 30px,rgb(175,175,177) 30px,rgb(175,175,177) 33px,rgb(179,179,180) 33px,rgb(179,179,180) 37px,rgb(165,165,171) 37px,rgb(165,165,171) 41px,rgb(142,142,142) 41px,rgb(142,142,142) 44px,rgb(146,146,145) 44px,rgb(146,146,145) 46px,rgb(158,158,155) 46px,rgb(158,158,155) 49px,rgb(177,177,179) 49px,rgb(177,177,179) 51px,rgb(170,170,176) 51px,rgb(170,170,176) 55px,rgb(157,157,156) 55px,rgb(157,157,156) 59px,rgb(222,222,222) 59px,rgb(222,222,222) 61px,rgb(157,157,156) 61px,rgb(157,157,156) 63px,rgb(148,148,145) 63px,rgb(148,148,145) 65px,rgb(154,154,153) 65px,rgb(154,154,153) 69px,rgb(180,180,185) 69px,rgb(180,180,185) 72px,rgb(153,153,158) 72px,rgb(153,153,158) 75px,rgb(225,225,225) 75px,rgb(225,225,225) 78px,rgb(188,188,192) 78px,rgb(188,188,192) 80px,rgb(218,218,218) 80px,rgb(218,218,218) 84px,rgb(183,183,187) 84px,rgb(183,183,187) 86px)"></div>
<div class="bl" style="left:289px;top:364.5px;width:67px;height:13px;background:linear-gradient(90deg,rgb(148,148,149) 0px,rgb(148,148,149) 2px,rgb(149,149,151) 2px,rgb(149,149,151) 4px,rgb(159,159,164) 4px,rgb(159,159,164) 7px,rgb(175,175,176) 7px,rgb(175,175,176) 10px,rgb(155,155,153) 10px,rgb(155,155,153) 13px,rgb(213,213,213) 13px,rgb(213,213,213) 17px,rgb(154,154,153) 17px,rgb(154,154,153) 19px,rgb(166,166,168) 19px,rgb(166,166,168) 22px,rgb(196,196,201) 22px,rgb(196,196,201) 26px,rgb(175,175,172) 26px,rgb(175,175,172) 29px,rgb(188,188,188) 29px,rgb(188,188,188) 31px,rgb(192,192,192) 31px,rgb(192,192,192) 35px,rgb(146,146,152) 35px,rgb(146,146,152) 38px,rgb(143,143,141) 38px,rgb(143,143,141) 40px,rgb(152,152,154) 40px,rgb(152,152,154) 42px,rgb(143,143,140) 42px,rgb(143,143,140) 44px,rgb(182,182,179) 44px,rgb(182,182,179) 46px,rgb(146,146,152) 46px,rgb(146,146,152) 48px,rgb(194,194,199) 48px,rgb(194,194,199) 51px,rgb(190,190,193) 51px,rgb(190,190,193) 53px,rgb(155,155,153) 53px,rgb(155,155,153) 55px,rgb(225,225,225) 55px,rgb(225,225,225) 57px,rgb(182,182,183) 57px,rgb(182,182,183) 59px,rgb(148,148,148) 59px,rgb(148,148,148) 62px,rgb(169,169,170) 62px,rgb(169,169,170) 65px,rgb(160,160,157) 65px,rgb(160,160,157) 67px)"></div>
<div class="bl" style="left:289px;top:385.5px;width:96px;height:13px;background:linear-gradient(90deg,rgb(191,191,197) 0px,rgb(191,191,197) 3px,rgb(160,160,166) 3px,rgb(160,160,166) 7px,rgb(143,143,146) 7px,rgb(143,143,146) 9px,rgb(164,164,168) 9px,rgb(164,164,168) 13px,rgb(155,155,153) 13px,rgb(155,155,153) 15px,rgb(152,152,155) 15px,rgb(152,152,155) 19px,rgb(160,160,157) 19px,rgb(160,160,157) 21px,rgb(148,148,152) 21px,rgb(148,148,152) 23px,rgb(179,179,181) 23px,rgb(179,179,181) 25px,rgb(152,152,153) 25px,rgb(152,152,153) 29px,rgb(156,156,160) 29px,rgb(156,156,160) 31px,rgb(182,182,180) 31px,rgb(182,182,180) 33px,rgb(186,186,191) 33px,rgb(186,186,191) 36px,rgb(164,164,162) 36px,rgb(164,164,162) 38px,rgb(198,198,196) 38px,rgb(198,198,196) 41px,rgb(143,143,145) 41px,rgb(143,143,145) 44px,rgb(169,169,174) 44px,rgb(169,169,174) 46px,rgb(198,198,198) 46px,rgb(198,198,198) 50px,rgb(180,180,186) 50px,rgb(180,180,186) 53px,rgb(162,162,167) 53px,rgb(162,162,167) 55px,rgb(170,170,175) 55px,rgb(170,170,175) 57px,rgb(170,170,171) 57px,rgb(170,170,171) 60px,rgb(163,163,167) 60px,rgb(163,163,167) 64px,rgb(159,159,160) 64px,rgb(159,159,160) 66px,rgb(151,151,151) 66px,rgb(151,151,151) 70px,rgb(164,164,163) 70px,rgb(164,164,163) 73px,rgb(154,154,155) 73px,rgb(154,154,155) 75px,rgb(184,184,182) 75px,rgb(184,184,182) 77px,rgb(151,151,152) 77px,rgb(151,151,152) 79px,rgb(154,154,152) 79px,rgb(154,154,152) 82px,rgb(198,198,201) 82px,rgb(198,198,201) 84px,rgb(217,217,217) 84px,rgb(217,217,217) 87px,rgb(174,174,175) 87px,rgb(174,174,175) 90px,rgb(213,213,213) 90px,rgb(213,213,213) 93px,rgb(142,142,142) 93px,rgb(142,142,142) 96px)"></div>
<div class="bl" style="left:289px;top:406.5px;width:96px;height:13px;background:linear-gradient(90deg,rgb(179,179,182) 0px,rgb(179,179,182) 3px,rgb(183,183,189) 3px,rgb(183,183,189) 5px,rgb(183,183,181) 5px,rgb(183,183,181) 7px,rgb(158,158,156) 7px,rgb(158,158,156) 10px,rgb(167,167,166) 10px,rgb(167,167,166) 13px,rgb(172,172,176) 13px,rgb(172,172,176) 16px,rgb(168,168,173) 16px,rgb(168,168,173) 18px,rgb(162,162,159) 18px,rgb(162,162,159) 20px,rgb(148,148,145) 20px,rgb(148,148,145) 23px,rgb(152,152,152) 23px,rgb(152,152,152) 26px,rgb(196,196,202) 26px,rgb(196,196,202) 30px,rgb(187,187,191) 30px,rgb(187,187,191) 33px,rgb(216,216,216) 33px,rgb(216,216,216) 37px,rgb(189,189,193) 37px,rgb(189,189,193) 41px,rgb(153,153,156) 41px,rgb(153,153,156) 43px,rgb(149,149,155) 43px,rgb(149,149,155) 47px,rgb(158,158,159) 47px,rgb(158,158,159) 50px,rgb(142,142,140) 50px,rgb(142,142,140) 53px,rgb(182,182,184) 53px,rgb(182,182,184) 56px,rgb(156,156,157) 56px,rgb(156,156,157) 60px,rgb(175,175,175) 60px,rgb(175,175,175) 63px,rgb(152,152,151) 63px,rgb(152,152,151) 66px,rgb(182,182,182) 66px,rgb(182,182,182) 68px,rgb(188,188,188) 68px,rgb(188,188,188) 71px,rgb(182,182,185) 71px,rgb(182,182,185) 73px,rgb(190,190,195) 73px,rgb(190,190,195) 76px,rgb(172,172,174) 76px,rgb(172,172,174) 78px,rgb(166,166,167) 78px,rgb(166,166,167) 80px,rgb(172,172,169) 80px,rgb(172,172,169) 83px,rgb(183,183,184) 83px,rgb(183,183,184) 86px,rgb(169,169,175) 86px,rgb(169,169,175) 89px,rgb(165,165,164) 89px,rgb(165,165,164) 91px,rgb(145,145,143) 91px,rgb(145,145,143) 94px,rgb(192,192,191) 94px,rgb(192,192,191) 96px)"></div>
<div class="bl" style="left:289px;top:427.5px;width:96px;height:13px;background:linear-gradient(90deg,rgb(182,182,188) 0px,rgb(182,182,188) 4px,rgb(155,155,153) 4px,rgb(155,155,153) 6px,rgb(148,148,154) 6px,rgb(148,148,154) 9px,rgb(153,153,157) 9px,rgb(153,153,157) 11px,rgb(155,155,158) 11px,rgb(155,155,158) 14px,rgb(186,186,192) 14px,rgb(186,186,192) 18px,rgb(177,177,178) 18px,rgb(177,177,178) 20px,rgb(155,155,160) 20px,rgb(155,155,160) 22px,rgb(170,170,168) 22px,rgb(170,170,168) 24px,rgb(168,168,168) 24px,rgb(168,168,168) 28px,rgb(177,177,174) 28px,rgb(177,177,174) 30px,rgb(151,151,155) 30px,rgb(151,151,155) 33px,rgb(176,176,182) 33px,rgb(176,176,182) 35px,rgb(162,162,166) 35px,rgb(162,162,166) 37px,rgb(160,160,164) 37px,rgb(160,160,164) 41px,rgb(185,185,183) 41px,rgb(185,185,183) 44px,rgb(182,182,179) 44px,rgb(182,182,179) 46px,rgb(185,185,187) 46px,rgb(185,185,187) 48px,rgb(173,173,172) 48px,rgb(173,173,172) 50px,rgb(168,168,167) 50px,rgb(168,168,167) 52px,rgb(184,184,186) 52px,rgb(184,184,186) 55px,rgb(175,175,180) 55px,rgb(175,175,180) 58px,rgb(163,163,166) 58px,rgb(163,163,166) 60px,rgb(194,194,195) 60px,rgb(194,194,195) 63px,rgb(173,173,176) 63px,rgb(173,173,176) 66px,rgb(159,159,164) 66px,rgb(159,159,164) 69px,rgb(183,183,187) 69px,rgb(183,183,187) 72px,rgb(162,162,163) 72px,rgb(162,162,163) 74px,rgb(182,182,180) 74px,rgb(182,182,180) 76px,rgb(177,177,180) 76px,rgb(177,177,180) 78px,rgb(167,167,168) 78px,rgb(167,167,168) 82px,rgb(211,211,211) 82px,rgb(211,211,211) 84px,rgb(184,184,181) 84px,rgb(184,184,181) 87px,rgb(181,181,184) 87px,rgb(181,181,184) 91px,rgb(185,185,191) 91px,rgb(185,185,191) 95px,rgb(184,184,188) 95px,rgb(184,184,188) 96px)"></div>
<div class="bl" style="left:289px;top:448.5px;width:96px;height:13px;background:linear-gradient(90deg,rgb(153,153,150) 0px,rgb(153,153,150) 2px,rgb(183,183,180) 2px,rgb(183,183,180) 5px,rgb(150,150,151) 5px,rgb(150,150,151) 8px,rgb(197,197,198) 8px,rgb(197,197,198) 12px,rgb(162,162,159) 12px,rgb(162,162,159) 14px,rgb(179,179,176) 14px,rgb(179,179,176) 17px,rgb(144,144,142) 17px,rgb(144,144,142) 20px,rgb(167,167,171) 20px,rgb(167,167,171) 23px,rgb(217,217,217) 23px,rgb(217,217,217) 25px,rgb(184,184,183) 25px,rgb(184,184,183) 29px,rgb(177,177,175) 29px,rgb(177,177,175) 32px,rgb(155,155,154) 32px,rgb(155,155,154) 34px,rgb(142,142,140) 34px,rgb(142,142,140) 36px,rgb(149,149,148) 36px,rgb(149,149,148) 38px,rgb(228,228,228) 38px,rgb(228,228,228) 41px,rgb(188,188,187) 41px,rgb(188,188,187) 45px,rgb(189,189,188) 45px,rgb(189,189,188) 47px,rgb(177,177,181) 47px,rgb(177,177,181) 49px,rgb(198,198,199) 49px,rgb(198,198,199) 52px,rgb(142,142,139) 52px,rgb(142,142,139) 54px,rgb(185,185,191) 54px,rgb(185,185,191) 56px,rgb(161,161,167) 56px,rgb(161,161,167) 58px,rgb(195,195,199) 58px,rgb(195,195,199) 60px,rgb(216,216,216) 60px,rgb(216,216,216) 64px,rgb(172,172,171) 64px,rgb(172,172,171) 68px,rgb(149,149,151) 68px,rgb(149,149,151) 70px,rgb(168,168,172) 70px,rgb(168,168,172) 72px,rgb(170,170,171) 72px,rgb(170,170,171) 75px,rgb(159,159,156) 75px,rgb(159,159,156) 79px,rgb(187,187,193) 79px,rgb(187,187,193) 83px,rgb(188,188,185) 83px,rgb(188,188,185) 86px,rgb(161,161,167) 86px,rgb(161,161,167) 88px,rgb(157,157,160) 88px,rgb(157,157,160) 91px,rgb(180,180,180) 91px,rgb(180,180,180) 94px,rgb(142,142,144) 94px,rgb(142,142,144) 96px)"></div>
<div class="bl" style="left:289px;top:469.5px;width:96px;height:13px;background:linear-gradient(90deg,rgb(152,152,158) 0px,rgb(152,152,158) 3px,rgb(151,151,157) 3px,rgb(151,151,157) 5px,rgb(196,196,201) 5px,rgb(196,196,201) 7px,rgb(147,147,152) 7px,rgb(147,147,152) 10px,rgb(166,166,166) 10px,rgb(166,166,166) 14px,rgb(145,145,148) 14px,rgb(145,145,148) 16px,rgb(158,158,164) 16px,rgb(158,158,164) 19px,rgb(171,171,176) 19px,rgb(171,171,176) 21px,rgb(164,164,162) 21px,rgb(164,164,162) 23px,rgb(175,175,176) 23px,rgb(175,175,176) 25px,rgb(174,174,180) 25px,rgb(174,174,180) 29px,rgb(154,154,152) 29px,rgb(154,154,152) 31px,rgb(160,160,162) 31px,rgb(160,160,162) 33px,rgb(167,167,172) 33px,rgb(167,167,172) 37px,rgb(173,173,175) 37px,rgb(173,173,175) 39px,rgb(171,171,169) 39px,rgb(171,171,169) 41px,rgb(143,143,145) 41px,rgb(143,143,145) 43px,rgb(143,143,141) 43px,rgb(143,143,141) 46px,rgb(197,197,203) 46px,rgb(197,197,203) 48px,rgb(155,155,156) 48px,rgb(155,155,156) 51px,rgb(170,170,176) 51px,rgb(170,170,176) 54px,rgb(158,158,155) 54px,rgb(158,158,155) 58px,rgb(153,153,156) 58px,rgb(153,153,156) 61px,rgb(206,206,206) 61px,rgb(206,206,206) 63px,rgb(187,187,191) 63px,rgb(187,187,191) 67px,rgb(146,146,152) 67px,rgb(146,146,152) 70px,rgb(187,187,185) 70px,rgb(187,187,185) 73px,rgb(156,156,154) 73px,rgb(156,156,154) 76px,rgb(170,170,169) 76px,rgb(170,170,169) 80px,rgb(188,188,188) 80px,rgb(188,188,188) 83px,rgb(213,213,213) 83px,rgb(213,213,213) 85px,rgb(222,222,222) 85px,rgb(222,222,222) 88px,rgb(145,145,146) 88px,rgb(145,145,146) 90px,rgb(183,183,187) 90px,rgb(183,183,187) 94px,rgb(162,162,159) 94px,rgb(162,162,159) 96px)"></div>
<div class="bl" style="left:289px;top:490.5px;width:96px;height:13px;background:linear-gradient(90deg,rgb(161,161,167) 0px,rgb(161,161,167) 2px,rgb(183,183,181) 2px,rgb(183,183,181) 6px,rgb(158,158,161) 6px,rgb(158,158,161) 9px,rgb(166,166,165) 9px,rgb(166,166,165) 11px,rgb(151,151,148) 11px,rgb(151,151,148) 14px,rgb(154,154,151) 14px,rgb(154,154,151) 17px,rgb(156,156,154) 17px,rgb(156,156,154) 19px,rgb(198,198,197) 19px,rgb(198,198,197) 23px,rgb(166,166,163) 23px,rgb(166,166,163) 26px,rgb(163,163,165) 26px,rgb(163,163,165) 28px,rgb(182,182,184) 28px,rgb(182,182,184) 30px,rgb(189,189,186) 30px,rgb(189,189,186) 32px,rgb(177,177,176) 32px,rgb(177,177,176) 34px,rgb(159,159,162) 34px,rgb(159,159,162) 37px,rgb(143,143,144) 37px,rgb(143,143,144) 40px,rgb(163,163,162) 40px,rgb(163,163,162) 44px,rgb(162,162,166) 44px,rgb(162,162,166) 47px,rgb(174,174,171) 47px,rgb(174,174,171) 50px,rgb(195,195,196) 50px,rgb(195,195,196) 52px,rgb(154,154,156) 52px,rgb(154,154,156) 54px,rgb(157,157,157) 54px,rgb(157,157,157) 57px,rgb(168,168,167) 57px,rgb(168,168,167) 59px,rgb(160,160,159) 59px,rgb(160,160,159) 61px,rgb(174,174,176) 61px,rgb(174,174,176) 63px,rgb(142,142,147) 63px,rgb(142,142,147) 67px,rgb(169,169,166) 67px,rgb(169,169,166) 70px,rgb(178,178,177) 70px,rgb(178,178,177) 73px,rgb(175,175,175) 73px,rgb(175,175,175) 75px,rgb(147,147,145) 75px,rgb(147,147,145) 77px,rgb(190,190,191) 77px,rgb(190,190,191) 81px,rgb(181,181,181) 81px,rgb(181,181,181) 83px,rgb(142,142,140) 83px,rgb(142,142,140) 87px,rgb(188,188,185) 87px,rgb(188,188,185) 91px,rgb(163,163,164) 91px,rgb(163,163,164) 95px,rgb(168,168,172) 95px,rgb(168,168,172) 96px)"></div>
<div class="bl" style="left:289px;top:511.5px;width:96px;height:13px;background:linear-gradient(90deg,rgb(159,159,159) 0px,rgb(159,159,159) 2px,rgb(165,165,162) 2px,rgb(165,165,162) 4px,rgb(178,178,184) 4px,rgb(178,178,184) 6px,rgb(170,170,175) 6px,rgb(170,170,175) 8px,rgb(187,187,187) 8px,rgb(187,187,187) 10px,rgb(197,197,200) 10px,rgb(197,197,200) 13px,rgb(145,145,146) 13px,rgb(145,145,146) 17px,rgb(173,173,177) 17px,rgb(173,173,177) 19px,rgb(222,222,222) 19px,rgb(222,222,222) 23px,rgb(207,207,207) 23px,rgb(207,207,207) 25px,rgb(152,152,150) 25px,rgb(152,152,150) 27px,rgb(194,194,191) 27px,rgb(194,194,191) 30px,rgb(186,186,186) 30px,rgb(186,186,186) 32px,rgb(224,224,224) 32px,rgb(224,224,224) 35px,rgb(157,157,161) 35px,rgb(157,157,161) 39px,rgb(148,148,147) 39px,rgb(148,148,147) 41px,rgb(171,171,175) 41px,rgb(171,171,175) 43px,rgb(159,159,157) 43px,rgb(159,159,157) 47px,rgb(198,198,197) 47px,rgb(198,198,197) 49px,rgb(197,197,197) 49px,rgb(197,197,197) 53px,rgb(171,171,174) 53px,rgb(171,171,174) 55px,rgb(143,143,146) 55px,rgb(143,143,146) 57px,rgb(180,180,185) 57px,rgb(180,180,185) 60px,rgb(145,145,147) 60px,rgb(145,145,147) 62px,rgb(195,195,197) 62px,rgb(195,195,197) 65px,rgb(178,178,180) 65px,rgb(178,178,180) 68px,rgb(145,145,147) 68px,rgb(145,145,147) 71px,rgb(185,185,187) 71px,rgb(185,185,187) 75px,rgb(184,184,181) 75px,rgb(184,184,181) 77px,rgb(153,153,151) 77px,rgb(153,153,151) 80px,rgb(174,174,171) 80px,rgb(174,174,171) 83px,rgb(167,167,171) 83px,rgb(167,167,171) 85px,rgb(198,198,195) 85px,rgb(198,198,195) 87px,rgb(181,181,182) 87px,rgb(181,181,182) 89px,rgb(176,176,173) 89px,rgb(176,176,173) 93px,rgb(149,149,154) 93px,rgb(149,149,154) 96px)"></div>
<div class="bl" style="left:289px;top:532.5px;width:96px;height:13px;background:linear-gradient(90deg,rgb(144,144,145) 0px,rgb(144,144,145) 2px,rgb(183,183,182) 2px,rgb(183,183,182) 4px,rgb(221,221,221) 4px,rgb(221,221,221) 6px,rgb(179,179,184) 6px,rgb(179,179,184) 9px,rgb(174,174,173) 9px,rgb(174,174,173) 11px,rgb(178,178,179) 11px,rgb(178,178,179) 14px,rgb(147,147,152) 14px,rgb(147,147,152) 17px,rgb(181,181,187) 17px,rgb(181,181,187) 20px,rgb(154,154,159) 20px,rgb(154,154,159) 22px,rgb(177,177,178) 22px,rgb(177,177,178) 25px,rgb(194,194,195) 25px,rgb(194,194,195) 29px,rgb(156,156,156) 29px,rgb(156,156,156) 31px,rgb(179,179,182) 31px,rgb(179,179,182) 35px,rgb(152,152,152) 35px,rgb(152,152,152) 37px,rgb(173,173,174) 37px,rgb(173,173,174) 40px,rgb(155,155,156) 40px,rgb(155,155,156) 43px,rgb(152,152,157) 43px,rgb(152,152,157) 45px,rgb(164,164,168) 45px,rgb(164,164,168) 47px,rgb(195,195,199) 47px,rgb(195,195,199) 49px,rgb(148,148,153) 49px,rgb(148,148,153) 52px,rgb(185,185,184) 52px,rgb(185,185,184) 54px,rgb(164,164,163) 54px,rgb(164,164,163) 57px,rgb(196,196,197) 57px,rgb(196,196,197) 59px,rgb(196,196,200) 59px,rgb(196,196,200) 63px,rgb(187,187,186) 63px,rgb(187,187,186) 66px,rgb(142,142,145) 66px,rgb(142,142,145) 69px,rgb(173,173,176) 69px,rgb(173,173,176) 73px,rgb(196,196,197) 73px,rgb(196,196,197) 77px,rgb(166,166,170) 77px,rgb(166,166,170) 81px,rgb(164,164,165) 81px,rgb(164,164,165) 84px,rgb(177,177,183) 84px,rgb(177,177,183) 87px,rgb(142,142,146) 87px,rgb(142,142,146) 90px,rgb(153,153,158) 90px,rgb(153,153,158) 93px,rgb(169,169,175) 93px,rgb(169,169,175) 96px)"></div>
<div class="t" style="left:40.50px;top:7.0px;transform:scaleX(0.9545);">Computer is l10a732</div>
<div class="t" style="left:170.00px;top:7.0px;transform:scaleX(0.9790);">Windows (C:)</div>
<div class="t" style="left:264.00px;top:7.0px;transform:scaleX(1.0110);">temp</div>
<div class="t" style="left:718.50px;top:7.0px;transform:scaleX(0.9509);color:#6d6d6d;">Search temp</div>
<div class="t" style="left:267.50px;top:38.0px;transform:scaleX(0.9834);color:#4c607a;">Name</div>
<div class="t" style="left:528.40px;top:38.0px;transform:scaleX(1.0087);color:#4c607a;">Date modified</div>
<div class="t" style="left:648.60px;top:38.0px;transform:scaleX(0.9263);color:#4c607a;">Type</div>
<div class="t" style="left:890.00px;top:38.0px;transform:scaleX(0.8450);color:#4c607a;">Size</div>
<div class="t" style="left:288.00px;top:67.0px;transform:scaleX(0.9867);">test_out.rtf</div>
<div class="t" style="left:528.40px;top:67.0px;transform:scaleX(0.9525);color:#6d6d6d;">9/24/2019 8:52 AM</div>
<div class="t" style="left:648.40px;top:67.0px;transform:scaleX(0.9513);color:#6d6d6d;">Rich Text Format</div>
<div class="t" style="left:648.40px;top:88.0px;transform:scaleX(1.0195);color:#6d6d6d;">Microsoft</div>
<div class="t" style="left:703.10px;top:88.0px;transform:scaleX(0.8404);color:#6d6d6d;">Excel</div>
<div class="t" style="left:732.00px;top:88.0px;transform:scaleX(0.9464);color:#6d6d6d;">Worksheet</div>
<div class="t" style="left:648.40px;top:109.0px;transform:scaleX(1.0195);color:#6d6d6d;">Microsoft</div>
<div class="t" style="left:703.10px;top:109.0px;transform:scaleX(0.8404);color:#6d6d6d;">Excel</div>
<div class="t" style="left:732.00px;top:109.0px;transform:scaleX(0.9464);color:#6d6d6d;">Worksheet</div>
<div class="t" style="left:648.40px;top:130.0px;transform:scaleX(0.9482);color:#6d6d6d;">Text</div>
<div class="t" style="left:672.80px;top:130.0px;transform:scaleX(0.9881);color:#6d6d6d;">Document</div>
<div class="t" style="left:648.40px;top:151.0px;transform:scaleX(0.9482);color:#6d6d6d;">Text</div>
<div class="t" style="left:672.80px;top:151.0px;transform:scaleX(0.9881);color:#6d6d6d;">Document</div>
<div class="t" style="left:648.40px;top:172.0px;color:#6d6d6d;">Rich</div>
<div class="t" style="left:674.60px;top:172.0px;transform:scaleX(0.9482);color:#6d6d6d;">Text</div>
<div class="t" style="left:699.20px;top:172.0px;transform:scaleX(0.9491);color:#6d6d6d;">Format</div>
<div class="t" style="left:648.40px;top:193.0px;color:#6d6d6d;">Rich</div>
<div class="t" style="left:674.60px;top:193.0px;transform:scaleX(0.9482);color:#6d6d6d;">Text</div>
<div class="t" style="left:699.20px;top:193.0px;transform:scaleX(0.9491);color:#6d6d6d;">Format</div>
<div class="t" style="left:648.40px;top:214.0px;transform:scaleX(1.0195);color:#6d6d6d;">Microsoft</div>
<div class="t" style="left:703.10px;top:214.0px;transform:scaleX(0.8404);color:#6d6d6d;">Excel</div>
<div class="t" style="left:732.00px;top:214.0px;transform:scaleX(0.9464);color:#6d6d6d;">Worksheet</div>
<div class="t" style="left:648.40px;top:256.0px;transform:scaleX(0.9816);color:#6d6d6d;">Firefox</div>
<div class="t" style="left:686.90px;top:256.0px;transform:scaleX(1.0336);color:#6d6d6d;">HTML</div>
<div class="t" style="left:724.10px;top:256.0px;transform:scaleX(0.9646);color:#6d6d6d;">Document</div>
<div class="t" style="left:648.40px;top:382.0px;transform:scaleX(1.0195);color:#6d6d6d;">Microsoft</div>
<div class="t" style="left:703.10px;top:382.0px;transform:scaleX(0.8404);color:#6d6d6d;">Excel</div>
<div class="t" style="left:732.00px;top:382.0px;transform:scaleX(0.9464);color:#6d6d6d;">Worksheet</div>
<div class="t" style="left:648.40px;top:403.0px;transform:scaleX(1.0195);color:#6d6d6d;">Microsoft</div>
<div class="t" style="left:703.10px;top:403.0px;transform:scaleX(0.8404);color:#6d6d6d;">Excel</div>
<div class="t" style="left:732.00px;top:403.0px;transform:scaleX(0.9709);color:#6d6d6d;">Comma</div>
<div class="t" style="left:777.50px;top:403.0px;transform:scaleX(0.9488);color:#6d6d6d;">Separated</div>
<div class="t" style="left:832.40px;top:403.0px;transform:scaleX(0.9017);color:#6d6d6d;">Values...</div>
<div class="t" style="left:648.40px;top:424.0px;transform:scaleX(0.9136);color:#6d6d6d;">Adobe</div>
<div class="t" style="left:687.00px;top:424.0px;transform:scaleX(0.9567);color:#6d6d6d;">Acrobat</div>
<div class="t" style="left:732.00px;top:424.0px;transform:scaleX(0.9881);color:#6d6d6d;">Document</div>
<div class="t" style="left:648.40px;top:445.0px;transform:scaleX(1.0195);color:#6d6d6d;">Microsoft</div>
<div class="t" style="left:703.10px;top:445.0px;transform:scaleX(0.8404);color:#6d6d6d;">Excel</div>
<div class="t" style="left:732.00px;top:445.0px;transform:scaleX(0.9464);color:#6d6d6d;">Worksheet</div>
<div class="t" style="left:648.40px;top:466.0px;transform:scaleX(1.0195);color:#6d6d6d;">Microsoft</div>
<div class="t" style="left:703.10px;top:466.0px;transform:scaleX(0.8404);color:#6d6d6d;">Excel</div>
<div class="t" style="left:732.00px;top:466.0px;transform:scaleX(0.9464);color:#6d6d6d;">Worksheet</div>
<div class="t" style="left:648.40px;top:487.0px;transform:scaleX(1.0195);color:#6d6d6d;">Microsoft</div>
<div class="t" style="left:703.10px;top:487.0px;transform:scaleX(0.8404);color:#6d6d6d;">Excel</div>
<div class="t" style="left:732.00px;top:487.0px;transform:scaleX(0.9464);color:#6d6d6d;">Worksheet</div>
<div class="t" style="left:648.40px;top:508.0px;transform:scaleX(1.0195);color:#6d6d6d;">Microsoft</div>
<div class="t" style="left:703.10px;top:508.0px;transform:scaleX(0.8404);color:#6d6d6d;">Excel</div>
<div class="t" style="left:732.00px;top:508.0px;transform:scaleX(0.9464);color:#6d6d6d;">Worksheet</div>
<div class="t" style="left:648.40px;top:529.0px;transform:scaleX(0.9136);color:#6d6d6d;">Adobe</div>
<div class="t" style="left:687.00px;top:529.0px;transform:scaleX(0.9567);color:#6d6d6d;">Acrobat</div>
<div class="t" style="left:732.00px;top:529.0px;transform:scaleX(0.9881);color:#6d6d6d;">Document</div>
<!-- context menu -->
<div id="menu"></div>
<div class="hl" style="left:390px;top:280px;width:301px;height:22px"></div>
<div class="sep" style="left:398px;top:174px;width:285px"></div>
<div class="sep" style="left:398px;top:203px;width:285px"></div>
<div class="sep" style="left:398px;top:232px;width:285px"></div>
<div class="sep" style="left:398px;top:371px;width:285px"></div>
<div class="sep" style="left:398px;top:400px;width:285px"></div>
<div class="sep" style="left:398px;top:451px;width:285px"></div>
<div class="sep" style="left:398px;top:524px;width:285px"></div>
<svg class="ic" style="left:398px;top:181px" width="16" height="16" viewBox="0 0 16 16"><path d="M1.5 6V15.5H8M1.5 .5H9L12.5 4V8.5M9 .5V4H12.5" fill="none" stroke="#6a6a6a"/><rect x="0" y="2" width="7.2" height="4" fill="#8c4fa9"/><rect x="9.5" y="9.5" width="6" height="6" rx="1" fill="#fafafa" stroke="#666"/><path d="M11.3 8.6V10.4H13.7V8.6" fill="none" stroke="#666" stroke-width=".8"/><path d="M11.2 12H13.8M11.2 13.7H13.8" stroke="#444" stroke-width=".9"/></svg>
<svg class="ic" style="left:398px;top:210px" width="16" height="16" viewBox="0 0 16 16"><path d="M1.5 6V15.5H8M1.5 .5H9L12.5 4V8.5M9 .5V4H12.5" fill="none" stroke="#6a6a6a"/><rect x="0" y="2" width="7.2" height="4" fill="#f5821f"/><rect x="9.5" y="9.5" width="6" height="6" rx="1" fill="#fafafa" stroke="#666"/><path d="M11.3 8.6V10.4H13.7V8.6" fill="none" stroke="#666" stroke-width=".8"/><path d="M11.2 12H13.8M11.2 13.7H13.8" stroke="#444" stroke-width=".9"/></svg>
<svg class="ic" style="left:398px;top:261px" width="16" height="16" viewBox="0 0 16 16"><path d="M.5 4.3V12.7H11.5V11.4" fill="none" stroke="#1a1a1a"/><path d="M3 10.2C3.4 6.6 6 5 9.3 5V2.4L14.2 6.2L9.3 10V7.4C6.6 7.3 4.6 8 3 10.2Z" fill="none" stroke="#1a1a1a" stroke-linejoin="round"/></svg>
<svg class="ic" style="left:398px;top:305px" width="16" height="16" viewBox="0 0 16 16"><rect width="16" height="16" fill="#fff"/><path d="M7 2.5H12.5V11.5H7" fill="none" stroke="#000"/><path d="M8.5 1.5H13.5V10.5" fill="none" stroke="#000" stroke-dasharray="1 1"/><path d="M1.5 4V10.5H9.5V5H5L4 3.5H2Z" fill="#ffff00" stroke="#000"/><path d="M9 11.5V13.5M5.5 14H13" stroke="#000" stroke-width="1.2"/></svg>
<svg class="ic" style="left:398px;top:327px" width="16" height="16" viewBox="0 0 16 16"><defs><linearGradient id="cg" x1="0" y1="0" x2="1" y2=".6"><stop offset="0" stop-color="#1b6db3"/><stop offset=".55" stop-color="#0b4a86"/><stop offset="1" stop-color="#052a57"/></linearGradient></defs><circle cx="8" cy="8.3" r="8" fill="url(#cg)"/><path d="M10.6 .2V5.9M10.6 10.5V16.4" stroke="#f2f2f2" stroke-width="1"/><rect x="14" y="7.7" width="2.2" height="1.2" fill="#b9cadd"/><circle cx="10.3" cy="8.3" r="2" fill="#d8d8d8"/><rect x="9.6" y="7.6" width="1.4" height="1.4" fill="#b5b5b5"/><rect x=".3" y="7.5" width="5" height="1.6" fill="#86b4dc"/><path d="M.9 4.6L5.4 6.9M.9 12L5.4 9.7" stroke="#e8f0f8" stroke-width=".9"/><path d="M.4 6L5 7.2M.4 10.6L5 9.4" stroke="#4f8fc8" stroke-width=".8"/><path d="M7.2 6L7.2 10.6L5.2 9.6L4.6 8.3L5.2 7Z" fill="#fff"/><path d="M5.6 5.2L6.6 6.6M5.6 11.4L6.6 10" stroke="#dfeaf5" stroke-width=".7"/></svg>
<svg class="chev" style="left:675px;top:283.5px" width="9" height="14" viewBox="0 0 9 14"><path d="M.8 .8L7 6.8L.8 12.8" fill="none" stroke="#1a1a1a" stroke-width="1"/></svg>
<svg class="chev" style="left:675px;top:305.5px" width="9" height="14" viewBox="0 0 9 14"><path d="M.8 .8L7 6.8L.8 12.8" fill="none" stroke="#1a1a1a" stroke-width="1"/></svg>
<svg class="chev" style="left:675px;top:327.5px" width="9" height="14" viewBox="0 0 9 14"><path d="M.8 .8L7 6.8L.8 12.8" fill="none" stroke="#1a1a1a" stroke-width="1"/></svg>
<svg class="chev" style="left:675px;top:378.5px" width="9" height="14" viewBox="0 0 9 14"><path d="M.8 .8L7 6.8L.8 12.8" fill="none" stroke="#1a1a1a" stroke-width="1"/></svg>
<div class="t" style="left:422.30px;top:83.0px;transform:scaleX(0.9724);font-weight:700;">Open</div>
<div class="t" style="left:422.30px;top:105.0px;transform:scaleX(0.9042);">Edit</div>
<div class="t" style="left:422.30px;top:127.0px;transform:scaleX(0.9696);">New</div>
<div class="t" style="left:422.30px;top:149.0px;transform:scaleX(0.9708);">Print</div>
<div class="t" style="left:422.30px;top:178.0px;transform:scaleX(0.9688);">Convert to PDF in Foxit PhantomPDF</div>
<div class="t" style="left:422.30px;top:207.0px;transform:scaleX(0.9528);">Convert to PDF in Foxit Reader</div>
<div class="t" style="left:422.30px;top:236.0px;transform:scaleX(0.9345);">Scan for Viruses...</div>
<div class="t" style="left:422.30px;top:258.0px;transform:scaleX(0.8872);">Share</div>
<div class="t" style="left:422.30px;top:280.0px;transform:scaleX(1.0121);">Open with</div>
<div class="t" style="left:422.30px;top:302.0px;transform:scaleX(0.9851);">WinZip</div>
<div class="t" style="left:422.30px;top:324.0px;transform:scaleX(0.9710);">Cisco AMP For Endpoints</div>
<div class="t" style="left:422.30px;top:346.0px;transform:scaleX(0.9566);">Restore previous versions</div>
<div class="t" style="left:422.30px;top:375.0px;transform:scaleX(0.9426);">Send to</div>
<div class="t" style="left:422.30px;top:404.0px;transform:scaleX(0.9617);">Cut</div>
<div class="t" style="left:422.30px;top:426.0px;transform:scaleX(0.9781);">Copy</div>
<div class="t" style="left:422.30px;top:455.0px;transform:scaleX(0.9758);">Create shortcut</div>
<div class="t" style="left:422.30px;top:477.0px;transform:scaleX(0.9339);">Delete</div>
<div class="t" style="left:422.30px;top:499.0px;transform:scaleX(0.9347);">Rename</div>
<div class="t" style="left:422.30px;top:528.0px;transform:scaleX(0.9599);">Properties</div>
<!-- submenu -->
<div id="sub"></div>
<div class="hl" style="left:691px;top:304px;width:214px;height:22px;background:#d2d2d2"></div>
<div class="sep" style="left:699px;top:329px;width:199px"></div>
<svg class="ic" style="left:699px;top:285px" width="16" height="16" viewBox="0 0 16 16"><defs><linearGradient id="ng" x1="0" y1="0" x2="0" y2="1"><stop offset="0" stop-color="#c9eefa"/><stop offset="1" stop-color="#86cfe3"/></linearGradient></defs><path d="M4.6 15.6H15.4V3H14.6V14.6H3.8Z" fill="#c9b48a"/><path d="M3.6 1.6H14.6L12.4 14.6H1.2Z" fill="url(#ng)" stroke="#8fc3d4" stroke-width=".5"/><path d="M3.2 4H13.8M2.9 6H13.5M2.6 8H13.2M2.3 10H12.9M2 12H12.6" stroke="#9ad4e6" stroke-width=".6"/><path d="M4.2 .4V2.2M5.8 .4V2.2M7.4 .4V2.2M9 .4V2.2M10.6 .4V2.2M12.2 .4V2.2M13.8 .4V2.2" stroke="#333" stroke-width=".8"/></svg>
<svg class="ic" style="left:699px;top:307px" width="16" height="16" viewBox="0 0 16 16"><rect x="8" y="2" width="7.5" height="12" fill="#fff" stroke="#2b579a"/><path d="M10 4.5H14M10 6.5H14M10 8.5H14M10 10.5H14M10 12.5H14" stroke="#2b579a" stroke-width=".9"/><path d="M0 1.8L10 .3V15.7L0 14.2Z" fill="#2b579a"/><text x="5" y="11.6" font-family="'Liberation Sans',sans-serif" font-size="9" font-weight="700" fill="#fff" text-anchor="middle">W</text></svg>
<svg class="ic" style="left:699px;top:336px" width="16" height="16" viewBox="0 0 16 16"><rect width="16" height="16" fill="#0078d7"/><path d="M2.5 6.5H13.5V14H2.5Z" fill="#fff"/><path d="M5.5 6.5C5.5 2 10.5 2 10.5 6.5" fill="none" stroke="#fff" stroke-width="1.1"/><rect x="5.6" y="8" width="2.1" height="2.1" fill="#f25022"/><rect x="8.3" y="8" width="2.1" height="2.1" fill="#7fba00"/><rect x="5.6" y="10.7" width="2.1" height="2.1" fill="#00a4ef"/><rect x="8.3" y="10.7" width="2.1" height="2.1" fill="#ffb900"/></svg>
<div class="t" style="left:723.30px;top:282.0px;transform:scaleX(1.0202);">Notepad</div>
<div class="t" style="left:723.30px;top:304.0px;transform:scaleX(1.0151);">Word</div>
<div class="t" style="left:723.30px;top:333.0px;transform:scaleX(0.9372);">Search the Store</div>
<div class="t" style="left:723.30px;top:355.0px;transform:scaleX(0.9764);">Choose another app</div>
</div>
<div id="frame"></div>
<!-- arrows + cursor -->
<svg style="position:absolute;left:0;top:0;z-index:60" width="990" height="552" viewBox="0 0 990 552">
<defs><filter id="sh" x="-10%" y="-10%" width="120%" height="130%"><feDropShadow dx="3" dy="4.3" stdDeviation="2" flood-color="#000" flood-opacity=".45"/></filter></defs>
<g filter="url(#sh)" fill="#ff0000" stroke="#ff0000" stroke-linecap="round" stroke-linejoin="round">
<path d="M961.5 255L812 310" stroke-width="2.6" fill="none"/>
<path d="M794.3 315.6L815 296.8Q807 310 822.2 317Z" stroke-width="1.5"/>
<path d="M982 390.5L856 372.5" stroke-width="2.6" fill="none"/>
<path d="M835.5 369.7L862.5 361.5Q849 370.5 859.3 383.2Z" stroke-width="1.5"/>
</g>
<g transform="translate(770.5,317.4)"><path d="M0 0V16.5L3.8 12.9L6.6 19.2L9.2 18L6.4 11.9H11.6Z" fill="#fff" stroke="#000" stroke-width="1.2" stroke-linejoin="miter"/></g>
</svg>
</body></html>
